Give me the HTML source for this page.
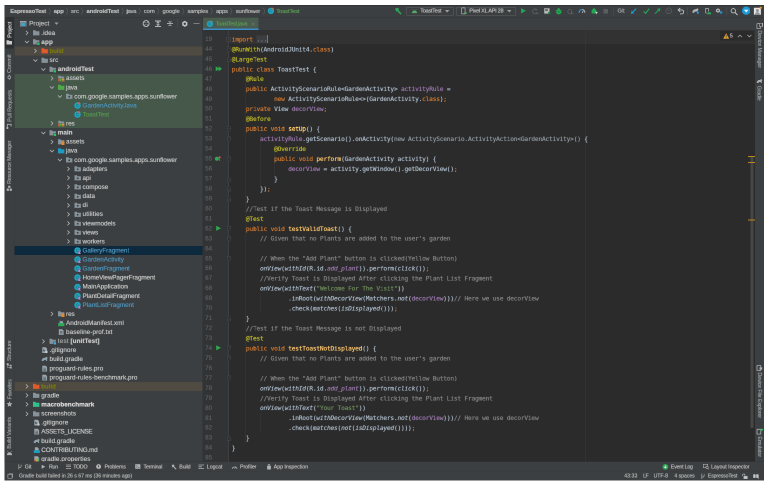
<!DOCTYPE html>
<html lang="en"><head><meta charset="utf-8"><title>EspressoTest – ToastTest.java</title>
<style>
html,body{margin:0;padding:0;background:#ffffff;}
body{width:768px;height:486px;overflow:hidden;position:relative;}
#w{position:absolute;left:0;top:0;width:1536px;height:972px;transform:scale(.5);transform-origin:0 0;will-change:transform;font-family:"Liberation Sans", sans-serif;overflow:hidden;}
#w div,#w svg{position:absolute;}
#w div.code{font-family:"DejaVu Sans Mono", "Liberation Mono", monospace;}
#w div span{position:static;}
#w div{text-shadow:0 0 1.2px currentColor;}
</style></head><body><div id="w">
<div style="left:8.60px;top:9.60px;width:1519.10px;height:951.10px;background:#3c3f41;"></div>
<div style="left:8.60px;top:9.60px;width:1519.10px;height:1.00px;background:#2a2c2d;"></div>
<div style="left:8.60px;top:9.60px;width:1.00px;height:951.10px;background:#2a2c2d;"></div>
<div style="left:8.60px;top:33.80px;width:1519.10px;height:1.00px;background:#323232;"></div>
<div style="top:13.74px;height:16.52px;line-height:16.52px;font-size:11.80px;color:#bbbbbb;white-space:pre;left:20.40px;font-weight:bold;letter-spacing:-0.41px;">EspressoTest</div>
<div style="top:13.74px;height:16.52px;line-height:16.52px;font-size:11.80px;color:#bbbbbb;white-space:pre;left:107.40px;font-weight:bold;letter-spacing:-0.33px;">app</div>
<div style="top:13.74px;height:16.52px;line-height:16.52px;font-size:11.80px;color:#bbbbbb;white-space:pre;left:142.00px;letter-spacing:0.09px;">src</div>
<div style="top:13.74px;height:16.52px;line-height:16.52px;font-size:11.80px;color:#bbbbbb;white-space:pre;left:173.00px;font-weight:bold;letter-spacing:-0.15px;">androidTest</div>
<div style="top:13.74px;height:16.52px;line-height:16.52px;font-size:11.80px;color:#bbbbbb;white-space:pre;left:252.80px;letter-spacing:-0.46px;">java</div>
<div style="top:13.74px;height:16.52px;line-height:16.52px;font-size:11.80px;color:#bbbbbb;white-space:pre;left:287.60px;letter-spacing:-0.16px;">com</div>
<div style="top:13.74px;height:16.52px;line-height:16.52px;font-size:11.80px;color:#bbbbbb;white-space:pre;left:325.00px;letter-spacing:-0.17px;">google</div>
<div style="top:13.74px;height:16.52px;line-height:16.52px;font-size:11.80px;color:#bbbbbb;white-space:pre;left:375.00px;letter-spacing:-0.42px;">samples</div>
<div style="top:13.74px;height:16.52px;line-height:16.52px;font-size:11.80px;color:#bbbbbb;white-space:pre;left:432.00px;letter-spacing:-0.55px;">apps</div>
<div style="top:13.74px;height:16.52px;line-height:16.52px;font-size:11.80px;color:#bbbbbb;white-space:pre;left:471.40px;letter-spacing:-0.17px;">sunflower</div>
<svg style="left:97.20px;top:14.80px;width:4.80px;height:14.40px;" viewBox="0 0 2.4 7.2"><path d="M0.3 0.2 L2.0 3.6 L0.3 7.0" fill="none" stroke="#6b6e70" stroke-width="0.45"/></svg>
<svg style="left:131.60px;top:14.80px;width:4.80px;height:14.40px;" viewBox="0 0 2.4 7.2"><path d="M0.3 0.2 L2.0 3.6 L0.3 7.0" fill="none" stroke="#6b6e70" stroke-width="0.45"/></svg>
<svg style="left:162.20px;top:14.80px;width:4.80px;height:14.40px;" viewBox="0 0 2.4 7.2"><path d="M0.3 0.2 L2.0 3.6 L0.3 7.0" fill="none" stroke="#6b6e70" stroke-width="0.45"/></svg>
<svg style="left:242.80px;top:14.80px;width:4.80px;height:14.40px;" viewBox="0 0 2.4 7.2"><path d="M0.3 0.2 L2.0 3.6 L0.3 7.0" fill="none" stroke="#6b6e70" stroke-width="0.45"/></svg>
<svg style="left:277.00px;top:14.80px;width:4.80px;height:14.40px;" viewBox="0 0 2.4 7.2"><path d="M0.3 0.2 L2.0 3.6 L0.3 7.0" fill="none" stroke="#6b6e70" stroke-width="0.45"/></svg>
<svg style="left:314.20px;top:14.80px;width:4.80px;height:14.40px;" viewBox="0 0 2.4 7.2"><path d="M0.3 0.2 L2.0 3.6 L0.3 7.0" fill="none" stroke="#6b6e70" stroke-width="0.45"/></svg>
<svg style="left:364.20px;top:14.80px;width:4.80px;height:14.40px;" viewBox="0 0 2.4 7.2"><path d="M0.3 0.2 L2.0 3.6 L0.3 7.0" fill="none" stroke="#6b6e70" stroke-width="0.45"/></svg>
<svg style="left:421.20px;top:14.80px;width:4.80px;height:14.40px;" viewBox="0 0 2.4 7.2"><path d="M0.3 0.2 L2.0 3.6 L0.3 7.0" fill="none" stroke="#6b6e70" stroke-width="0.45"/></svg>
<svg style="left:460.20px;top:14.80px;width:4.80px;height:14.40px;" viewBox="0 0 2.4 7.2"><path d="M0.3 0.2 L2.0 3.6 L0.3 7.0" fill="none" stroke="#6b6e70" stroke-width="0.45"/></svg>
<svg style="left:525.60px;top:14.80px;width:4.80px;height:14.40px;" viewBox="0 0 2.4 7.2"><path d="M0.3 0.2 L2.0 3.6 L0.3 7.0" fill="none" stroke="#6b6e70" stroke-width="0.45"/></svg>
<svg style="left:534.80px;top:15.20px;width:13.60px;height:13.60px;" viewBox="0 0 10 10"><circle cx="5" cy="5" r="4.7" fill="#1fa3bd"/><text x="4.9" y="7.3" font-size="6.4" font-weight="bold" text-anchor="middle" fill="#17798c" font-family="Liberation Sans, sans-serif">C</text><path d="M6.6 0 L9.8 1.7 L6.6 3.4 Z" fill="#59a869"/><rect x="6.2" y="0" width="1.2" height="3.2" fill="#e05555"/></svg>
<div style="top:13.74px;height:16.52px;line-height:16.52px;font-size:11.80px;color:#5b9a56;white-space:pre;left:552.60px;letter-spacing:-0.43px;">ToastTest</div>
<svg style="left:787.60px;top:14.00px;width:16.00px;height:16.00px;" viewBox="0 0 8 8"><path d="M1 1.6 L3.6 0.6 L5.2 2.2 L4.4 3.1 L7.6 6.6 L6.5 7.6 L3.2 4.2 L2.4 4.9 Z" fill="#2ea35a"/></svg>
<div style="left:813.20px;top:13.80px;width:93.80px;height:17.20px;box-sizing:border-box;border:1px solid #5e6060;background:#3c3f41;"></div>
<svg style="left:823.20px;top:16.80px;width:12.00px;height:10.40px;" viewBox="0 0 6 5.2"><path d="M0.4 4.6 A2.6 2.6 0 0 1 5.6 4.6 Z" fill="#59a869"/><path d="M1.2 0.6 L2 2 M4.8 0.6 L4 2" stroke="#59a869" stroke-width="0.5"/></svg>
<div style="top:14.16px;height:15.68px;line-height:15.68px;font-size:11.20px;color:#bbbbbb;white-space:pre;left:840.40px;letter-spacing:-0.57px;">ToastTest</div>
<svg style="left:890.40px;top:19.60px;width:8.80px;height:5.20px;" viewBox="0 0 4.4 2.6"><path d="M0 0 H4.4 L2.2 2.6 Z" fill="#9da0a2"/></svg>
<div style="left:912.60px;top:13.80px;width:119.00px;height:17.20px;box-sizing:border-box;border:1px solid #5e6060;background:#3c3f41;"></div>
<svg style="left:922.40px;top:15.20px;width:11.20px;height:14.00px;" viewBox="0 0 5.6 7"><rect x="0.5" y="0.4" width="3.6" height="6" rx="0.6" fill="none" stroke="#afb1b3" stroke-width="0.7"/><circle cx="4.4" cy="5.6" r="1.2" fill="#59a869"/></svg>
<div style="top:14.16px;height:15.68px;line-height:15.68px;font-size:11.20px;color:#bbbbbb;white-space:pre;left:938.40px;letter-spacing:-0.57px;">Pixel XL API 28</div>
<svg style="left:1014.40px;top:19.60px;width:8.80px;height:5.20px;" viewBox="0 0 4.4 2.6"><path d="M0 0 H4.4 L2.2 2.6 Z" fill="#9da0a2"/></svg>
<svg style="left:1042.40px;top:16.40px;width:10.00px;height:11.20px;" viewBox="0 0 5 5.6"><path d="M0.1 0.1 L4.9 2.8 L0.1 5.5 Z" fill="#22a652"/></svg>
<svg style="left:1064.40px;top:15.60px;width:12.80px;height:12.80px;" viewBox="0 0 6.4 6.4"><path d="M4.6 1.6 A2.4 2.4 0 1 0 5.2 4.2" fill="none" stroke="#5e6163" stroke-width="0.8"/><path d="M3.4 0.2 L5.6 1.6 L3.6 2.9Z" fill="#5e6163"/><path d="M4.4 4.4 L6.4 5.4 L4.4 6.4Z" fill="#5e6163"/></svg>
<svg style="left:1088.00px;top:16.00px;width:14.00px;height:13.20px;" viewBox="0 0 7 6.6"><path d="M0.2 0.2 H5.6 V3.4 L4 5.6 H0.2 Z" fill="#b4b6b8"/><rect x="1.2" y="1.4" width="2.6" height="1.3" fill="#3c3f41"/><path d="M4.2 3.6 L7 5 L4.2 6.4 Z" fill="#1f8f47"/></svg>
<svg style="left:1111.20px;top:15.60px;width:12.80px;height:13.20px;" viewBox="0 0 6.4 6.6"><rect x="0.9" y="1.2" width="4.6" height="5.2" rx="2.2" fill="#22a652"/><rect x="1.9" y="0.1" width="2.6" height="2" rx="1" fill="#22a652"/><path d="M0.1 2.6 H1.2 M6.3 2.6 H5.2 M0.1 4.4 H1.2 M6.3 4.4 H5.2" stroke="#22a652" stroke-width="0.7"/><circle cx="3.2" cy="3.9" r="0.9" fill="#17803e"/></svg>
<svg style="left:1134.00px;top:15.60px;width:13.60px;height:13.20px;" viewBox="0 0 6.8 6.6"><rect x="0.9" y="1.2" width="3.8" height="4.6" rx="1.8" fill="none" stroke="#5e6163" stroke-width="0.75"/><path d="M4.2 4 L6.6 5.2 L4.2 6.4Z" fill="#5e6163"/></svg>
<svg style="left:1156.80px;top:17.20px;width:14.00px;height:9.60px;" viewBox="0 0 7 4.8"><path d="M0.8 4.4 A2.8 2.8 0 0 1 3.6 1.0" fill="none" stroke="#2490d6" stroke-width="1.3"/><path d="M3.6 1.0 A2.8 2.8 0 0 1 6.3 4.4" fill="none" stroke="#c4c6c8" stroke-width="0.8"/><path d="M3.6 4.4 L4.9 2.2" stroke="#c4c6c8" stroke-width="0.75"/></svg>
<svg style="left:1181.60px;top:15.20px;width:14.40px;height:14.00px;" viewBox="0 0 7.2 7"><path d="M0.6 2.6 L3 0.4 L5.4 2.6 V6 H0.6 Z" fill="#22a652"/><path d="M4.2 3.8 L7.2 5.2 L5.8 5.6 L5.3 7 Z" fill="#d4d6d8"/></svg>
<div style="left:1206.60px;top:17.80px;width:9.20px;height:9.00px;background:#5a5d5f;"></div>
<div style="left:1226.40px;top:14.00px;width:0.80px;height:16.00px;background:#515456;"></div>
<div style="top:14.44px;height:15.12px;line-height:15.12px;font-size:10.80px;color:#a6a8aa;white-space:pre;left:1235.00px;letter-spacing:-0.30px;">Git:</div>
<svg style="left:1261.20px;top:15.60px;width:12.40px;height:12.40px;" viewBox="0 0 6.2 6.2"><path d="M5.7 0.5 L2 4.4" fill="none" stroke="#1f9ad8" stroke-width="1.05"/><path d="M0.4 5.9 L1.0 2.6 L3.8 5.3 Z" fill="#1f9ad8"/></svg>
<svg style="left:1285.60px;top:16.00px;width:13.60px;height:12.40px;" viewBox="0 0 6.8 6.2"><path d="M0.6 3.4 L2.6 5.4 L6.2 0.7" fill="none" stroke="#22a652" stroke-width="1.15"/></svg>
<svg style="left:1308.80px;top:15.60px;width:12.40px;height:12.40px;" viewBox="0 0 6.2 6.2"><path d="M0.5 5.7 L4.2 2" fill="none" stroke="#22a652" stroke-width="1.05"/><path d="M5.9 0.3 L5.3 3.6 L2.5 0.9 Z" fill="#22a652"/></svg>
<svg style="left:1331.40px;top:15.40px;width:13.20px;height:13.20px;" viewBox="0 0 6.6 6.6"><circle cx="3.3" cy="3.3" r="2.9" fill="none" stroke="#5e6163" stroke-width="0.7"/><path d="M3.2 1.6 V3.4 H4.6" fill="none" stroke="#5a5d5f" stroke-width="0.6"/></svg>
<svg style="left:1355.20px;top:15.20px;width:13.60px;height:13.60px;" viewBox="0 0 6.8 6.8"><path d="M1.4 2.4 H4.2 A2 2 0 0 1 4.2 6.4 H2.6" fill="none" stroke="#c4c6c8" stroke-width="0.9"/><path d="M2.8 0.4 L0.6 2.4 L2.8 4.4" fill="none" stroke="#c4c6c8" stroke-width="0.9"/></svg>
<div style="left:1375.20px;top:14.00px;width:0.80px;height:16.00px;background:#515456;"></div>
<svg style="left:1384.40px;top:16.40px;width:15.20px;height:13.20px;" viewBox="0 0 7.6 6.6"><path d="M0.4 4.8 C0.4 2.4 1.8 1.2 3.6 1.2 C4.4 1.2 4.8 0.6 5.4 0.2 L6.6 1.4 L5.8 2.2 V4.8 H4.6 V3.6 H2.4 V4.8 Z" fill="#b4b6b8"/><rect x="4.4" y="3.4" width="3" height="3" fill="#3c3f41"/><path d="M4.8 3.8 H7 V5 L5.9 6.4 L4.8 5 Z" fill="#2490d6"/></svg>
<svg style="left:1409.60px;top:16.40px;width:13.20px;height:12.80px;" viewBox="0 0 6.6 6.4"><rect x="0.5" y="0.4" width="3" height="4.6" rx="0.5" fill="none" stroke="#b4b6b8" stroke-width="0.7"/><rect x="1.8" y="3.6" width="4.6" height="2.8" fill="#3c3f41"/><path d="M2.2 6.2 A2 2 0 0 1 6.2 6.2 Z" fill="#22b55a"/></svg>
<svg style="left:1430.80px;top:16.40px;width:14.40px;height:12.80px;" viewBox="0 0 7.2 6.4"><path d="M0.4 1.6 L2.5 0.3 L4.6 1.6 V3.6 L2.5 4.8 L0.4 3.6 Z" fill="#b4b6b8"/><circle cx="2.5" cy="2.5" r="0.8" fill="#3c3f41"/><path d="M4.4 3.4 H6.8 V4.8 L5.6 6.2 L4.4 4.8 Z" fill="#2490d6"/></svg>
<div style="left:1452.80px;top:14.00px;width:0.80px;height:16.00px;background:#515456;"></div>
<svg style="left:1460.80px;top:15.60px;width:15.20px;height:15.20px;" viewBox="0 0 7.6 7.6"><circle cx="2.8" cy="2.8" r="2.2" fill="none" stroke="#c4c6c8" stroke-width="0.85"/><path d="M4.4 4.4 L7 7" stroke="#c4c6c8" stroke-width="0.95"/></svg>
<svg style="left:1483.60px;top:13.40px;width:16.80px;height:16.80px;" viewBox="0 0 8.4 8.4"><circle cx="4.2" cy="4.2" r="4.2" fill="#1d9bd8"/><path d="M1.9 3.2 H6.5 L4.2 6.0 Z" fill="#e8f4fb"/></svg>
<svg style="left:1507.20px;top:13.20px;width:16.80px;height:16.40px;" viewBox="0 0 8.4 8.2"><rect x="0.4" y="1.2" width="7" height="7" rx="0.5" fill="#e4e4e4"/><path d="M1.4 8.2 A2.5 2.6 0 0 1 6.4 8.2Z" fill="#8e9092"/><circle cx="3.9" cy="4.0" r="1.5" fill="#8e9092"/><circle cx="7.2" cy="1.3" r="1.2" fill="#f0902a"/></svg>
<div style="left:8.60px;top:34.60px;width:19.80px;height:62.80px;background:#2d2f30;"></div>
<div style="left:27.80px;top:34.60px;width:1.00px;height:888.60px;background:#37393b;"></div>
<div style="left:2.60px;top:51.78px;width:40.00px;height:14.84px;line-height:14.84px;font-size:10.60px;color:#d4d4d4;letter-spacing:-0.17px;text-align:left;white-space:pre;transform-origin:16.00px 50%;transform:rotate(-90deg);">Project</div>
<svg style="left:13.00px;top:80.00px;width:11.20px;height:9.20px;" viewBox="0 0 5.6 4.6"><path d="M0 0.2 H2.2 L2.9 1 H5.6 V4.6 H0 Z" fill="#c8cacb"/></svg>
<div style="left:0.00px;top:119.98px;width:45.20px;height:14.84px;line-height:14.84px;font-size:10.60px;color:#9da0a2;letter-spacing:0.14px;text-align:left;white-space:pre;transform-origin:18.60px 50%;transform:rotate(-90deg);">Commit</div>
<svg style="left:13.00px;top:148.80px;width:11.20px;height:11.20px;" viewBox="0 0 5.6 5.6"><circle cx="2.8" cy="2.8" r="1.4" fill="none" stroke="#afb1b3" stroke-width="0.7"/><path d="M2.8 0 V1.4 M2.8 4.2 V5.6" stroke="#afb1b3" stroke-width="0.7"/></svg>
<div style="left:-13.40px;top:203.78px;width:72.00px;height:14.84px;line-height:14.84px;font-size:10.60px;color:#9da0a2;letter-spacing:-0.12px;text-align:left;white-space:pre;transform-origin:32.00px 50%;transform:rotate(-90deg);">Pull Requests</div>
<svg style="left:13.00px;top:247.20px;width:11.20px;height:11.20px;" viewBox="0 0 5.6 5.6"><path d="M0.8 0.6 V5 M0.8 0.8 H4.6 V3" fill="none" stroke="#afb1b3" stroke-width="0.9"/><rect x="0" y="3.8" width="1.8" height="1.8" fill="#afb1b3"/></svg>
<div style="left:-24.80px;top:316.78px;width:94.80px;height:14.84px;line-height:14.84px;font-size:10.60px;color:#9da0a2;letter-spacing:-0.22px;text-align:left;white-space:pre;transform-origin:43.40px 50%;transform:rotate(-90deg);">Resource Manager</div>
<svg style="left:13.00px;top:371.20px;width:11.20px;height:11.20px;" viewBox="0 0 5.6 5.6"><rect x="0.2" y="3" width="2.2" height="2.4" fill="#afb1b3"/><rect x="3.2" y="3" width="2.2" height="2.4" fill="#afb1b3"/><rect x="1.7" y="0.2" width="2.2" height="2.2" fill="#afb1b3"/></svg>
<div style="left:-2.00px;top:693.98px;width:49.20px;height:14.84px;line-height:14.84px;font-size:10.60px;color:#9da0a2;letter-spacing:-0.23px;text-align:left;white-space:pre;transform-origin:20.60px 50%;transform:rotate(-90deg);">Structure</div>
<svg style="left:13.00px;top:726.00px;width:11.20px;height:11.20px;" viewBox="0 0 5.6 5.6"><rect x="0.2" y="0.2" width="2" height="2" fill="#afb1b3"/><rect x="3.2" y="1.8" width="2" height="1.6" fill="#afb1b3"/><rect x="3.2" y="3.9" width="2" height="1.6" fill="#afb1b3"/><path d="M1.2 2 V4.7 H3.2 M1.2 2.6 H3.2" fill="none" stroke="#afb1b3" stroke-width="0.5"/></svg>
<div style="left:-1.40px;top:771.38px;width:48.00px;height:14.84px;line-height:14.84px;font-size:10.60px;color:#9da0a2;letter-spacing:-0.45px;text-align:left;white-space:pre;transform-origin:20.00px 50%;transform:rotate(-90deg);">Favorites</div>
<svg style="left:12.60px;top:801.60px;width:12.00px;height:12.00px;" viewBox="0 0 6 6"><path d="M3 0.2 L3.9 2.1 L5.9 2.3 L4.4 3.7 L4.8 5.8 L3 4.8 L1.2 5.8 L1.6 3.7 L0.1 2.3 L2.1 2.1 Z" fill="#afb1b3"/></svg>
<div style="left:-13.20px;top:857.58px;width:71.60px;height:14.84px;line-height:14.84px;font-size:10.60px;color:#9da0a2;letter-spacing:-0.08px;text-align:left;white-space:pre;transform-origin:31.80px 50%;transform:rotate(-90deg);">Build Variants</div>
<svg style="left:12.60px;top:900.80px;width:12.00px;height:10.00px;" viewBox="0 0 6 5"><path d="M0.4 4.6 A2.6 2.8 0 0 1 5.6 4.6 Z" fill="#afb1b3"/><path d="M1 0.4 L1.8 1.8 M5 0.4 L4.2 1.8" stroke="#afb1b3" stroke-width="0.5"/></svg>
<div style="left:405.40px;top:34.60px;width:1.00px;height:888.60px;background:#323232;"></div>
<svg style="left:40.40px;top:41.60px;width:12.80px;height:11.60px;" viewBox="0 0 6.4 5.8"><rect x="0.3" y="0.3" width="5.8" height="5.2" fill="none" stroke="#9aa7b0" stroke-width="0.6"/><rect x="0.3" y="0.3" width="5.8" height="1.3" fill="#9aa7b0"/><rect x="1" y="2" width="4.4" height="3" fill="#40b6e0" opacity="0.85"/></svg>
<div style="top:38.30px;height:18.20px;line-height:18.20px;font-size:13.00px;color:#bbbbbb;white-space:pre;left:58.20px;">Project</div>
<svg style="left:109.20px;top:45.40px;width:8.00px;height:4.80px;" viewBox="0 0 4 2.4"><path d="M0 0 H4 L2 2.4 Z" fill="#9da0a2"/></svg>
<svg style="left:285.40px;top:40.20px;width:14.40px;height:14.40px;" viewBox="0 0 7.2 7.2"><circle cx="3.6" cy="3.6" r="3.0" fill="none" stroke="#c0c2c4" stroke-width="0.9"/><path d="M1.6 1.6 L5.6 5.6 M5.6 1.6 L1.6 5.6" stroke="#c0c2c4" stroke-width="0.6"/><circle cx="3.6" cy="3.6" r="0.9" fill="#3c3f41"/></svg>
<svg style="left:310.40px;top:41.00px;width:12.00px;height:12.80px;" viewBox="0 0 6 6.4"><path d="M0 0.5 H6 M0 5.9 H6" stroke="#c0c2c4" stroke-width="0.9"/><path d="M3 1.4 V5 M1.6 2.6 L3 1.3 L4.4 2.6 M1.6 3.8 L3 5.1 L4.4 3.8" fill="none" stroke="#c0c2c4" stroke-width="0.7"/></svg>
<svg style="left:333.80px;top:42.20px;width:12.00px;height:10.40px;" viewBox="0 0 6 5.2"><path d="M0 2.6 H6" stroke="#c0c2c4" stroke-width="0.8"/><path d="M1.6 0.2 L3 1.5 L4.4 0.2 M1.6 5 L3 3.7 L4.4 5" fill="none" stroke="#c0c2c4" stroke-width="0.7"/></svg>
<div style="left:353.60px;top:39.00px;width:0.80px;height:16.80px;background:#505355;"></div>
<svg style="left:362.80px;top:40.80px;width:13.20px;height:13.20px;" viewBox="0 0 6.6 6.6"><path d="M3.3 0.2 L5.9 1.7 V4.9 L3.3 6.4 L0.7 4.9 V1.7 Z" fill="#c0c2c4"/><circle cx="3.3" cy="3.3" r="1.2" fill="#3c3f41"/></svg>
<div style="left:386.80px;top:46.60px;width:11.80px;height:1.70px;background:#c0c2c4;"></div>
<div style="left:28.80px;top:147.58px;width:376.60px;height:108.77px;background:#45584a;"></div>
<div style="left:28.80px;top:93.19px;width:376.60px;height:18.13px;background:#4f4a42;"></div>
<div style="left:28.80px;top:763.93px;width:376.60px;height:18.13px;background:#4f4a42;"></div>
<div style="left:28.80px;top:492.01px;width:376.60px;height:18.13px;background:#0d293e;"></div>
<svg style="left:51.20px;top:61.20px;width:6.00px;height:9.60px;" viewBox="0 0 3 4.8"><path d="M0.4 0.4 L2.4 2.4 L0.4 4.4" fill="none" stroke="#b4b6b8" stroke-width="0.8"/></svg>
<svg style="left:66.20px;top:60.20px;width:13.60px;height:12.40px;" viewBox="0 0 6.8 6.2"><path d="M0 0.3 H2.4 L3.1 1.2 H6.4 V5.4 H0 Z" fill="#87939a"/></svg>
<div style="top:57.81px;height:17.78px;line-height:17.78px;font-size:12.70px;color:#c6c6c6;white-space:pre;left:82.60px;letter-spacing:0.05px;">.idea</div>
<svg style="left:49.20px;top:81.33px;width:9.60px;height:6.00px;" viewBox="0 0 4.8 3"><path d="M0.4 0.4 L2.4 2.4 L4.4 0.4" fill="none" stroke="#b4b6b8" stroke-width="0.8"/></svg>
<svg style="left:66.20px;top:78.33px;width:13.60px;height:12.40px;" viewBox="0 0 6.8 6.2"><path d="M0 0.3 H2.4 L3.1 1.2 H6.4 V5.4 H0 Z" fill="#87939a"/><rect x="3.8" y="3.2" width="2.8" height="2.8" fill="#3c3f41"/><rect x="4.2" y="3.6" width="2.4" height="2.4" fill="#2fc15a"/></svg>
<div style="top:75.94px;height:17.78px;line-height:17.78px;font-size:12.70px;color:#c6c6c6;white-space:pre;left:82.60px;font-weight:bold;letter-spacing:0.34px;">app</div>
<svg style="left:67.70px;top:97.46px;width:6.00px;height:9.60px;" viewBox="0 0 3 4.8"><path d="M0.4 0.4 L2.4 2.4 L0.4 4.4" fill="none" stroke="#b4b6b8" stroke-width="0.8"/></svg>
<svg style="left:82.70px;top:96.46px;width:13.60px;height:12.40px;" viewBox="0 0 6.8 6.2"><path d="M0 0.3 H2.4 L3.1 1.2 H6.4 V5.4 H0 Z" fill="#e2592a"/></svg>
<div style="top:94.07px;height:17.78px;line-height:17.78px;font-size:12.70px;color:#848504;white-space:pre;left:99.10px;letter-spacing:0.29px;">build</div>
<svg style="left:65.70px;top:117.58px;width:9.60px;height:6.00px;" viewBox="0 0 4.8 3"><path d="M0.4 0.4 L2.4 2.4 L4.4 0.4" fill="none" stroke="#b4b6b8" stroke-width="0.8"/></svg>
<svg style="left:82.70px;top:114.58px;width:13.60px;height:12.40px;" viewBox="0 0 6.8 6.2"><path d="M0 0.3 H2.4 L3.1 1.2 H6.4 V5.4 H0 Z" fill="#87939a"/></svg>
<div style="top:112.19px;height:17.78px;line-height:17.78px;font-size:12.70px;color:#c6c6c6;white-space:pre;left:99.10px;letter-spacing:0.32px;">src</div>
<svg style="left:82.20px;top:135.71px;width:9.60px;height:6.00px;" viewBox="0 0 4.8 3"><path d="M0.4 0.4 L2.4 2.4 L4.4 0.4" fill="none" stroke="#b4b6b8" stroke-width="0.8"/></svg>
<svg style="left:99.20px;top:132.71px;width:13.60px;height:12.40px;" viewBox="0 0 6.8 6.2"><path d="M0 0.3 H2.4 L3.1 1.2 H6.4 V5.4 H0 Z" fill="#87939a"/><rect x="3.8" y="3.2" width="2.8" height="2.8" fill="#3c3f41"/><rect x="4.2" y="3.6" width="2.4" height="2.4" fill="#2fc15a"/></svg>
<div style="top:130.32px;height:17.78px;line-height:17.78px;font-size:12.70px;color:#c6c6c6;white-space:pre;left:115.60px;font-weight:bold;letter-spacing:0.01px;">androidTest</div>
<svg style="left:100.70px;top:151.84px;width:6.00px;height:9.60px;" viewBox="0 0 3 4.8"><path d="M0.4 0.4 L2.4 2.4 L0.4 4.4" fill="none" stroke="#b4b6b8" stroke-width="0.8"/></svg>
<svg style="left:115.70px;top:150.84px;width:13.60px;height:12.40px;" viewBox="0 0 6.8 6.2"><path d="M0.2 0.2 H2.4 L3.1 1.0 H6.2 V3.0 H0.2 Z" fill="#87939a"/><rect x="0.2" y="3.3" width="1.4" height="2.6" fill="#e0573a"/><rect x="1.7" y="3.3" width="1.3" height="2.6" fill="#4fa84a"/><rect x="3.5" y="3.3" width="2.9" height="1.1" fill="#e8a03a"/><rect x="3.5" y="4.8" width="2.9" height="1.1" fill="#e08a32"/></svg>
<div style="top:148.45px;height:17.78px;line-height:17.78px;font-size:12.70px;color:#c6c6c6;white-space:pre;left:132.10px;letter-spacing:-0.00px;">assets</div>
<svg style="left:98.70px;top:171.97px;width:9.60px;height:6.00px;" viewBox="0 0 4.8 3"><path d="M0.4 0.4 L2.4 2.4 L4.4 0.4" fill="none" stroke="#b4b6b8" stroke-width="0.8"/></svg>
<svg style="left:115.70px;top:168.97px;width:13.60px;height:12.40px;" viewBox="0 0 6.8 6.2"><path d="M0 0.3 H2.4 L3.1 1.2 H6.4 V5.4 H0 Z" fill="#4fa84a"/></svg>
<div style="top:166.58px;height:17.78px;line-height:17.78px;font-size:12.70px;color:#c6c6c6;white-space:pre;left:132.10px;letter-spacing:-0.20px;">java</div>
<svg style="left:115.20px;top:190.10px;width:9.60px;height:6.00px;" viewBox="0 0 4.8 3"><path d="M0.4 0.4 L2.4 2.4 L4.4 0.4" fill="none" stroke="#b4b6b8" stroke-width="0.8"/></svg>
<svg style="left:132.20px;top:187.10px;width:13.60px;height:12.40px;" viewBox="0 0 6.8 6.2"><path d="M0 0.3 H2.4 L3.1 1.2 H6.4 V5.4 H0 Z" fill="#87939a"/><circle cx="3.2" cy="3.3" r="0.9" fill="#3c3f41"/></svg>
<div style="top:184.71px;height:17.78px;line-height:17.78px;font-size:12.70px;color:#c6c6c6;white-space:pre;left:148.60px;letter-spacing:0.01px;">com.google.samples.apps.sunflower</div>
<svg style="left:147.90px;top:204.02px;width:14.00px;height:14.00px;" viewBox="0 0 10 10"><circle cx="5" cy="5" r="4.7" fill="#1fa3bd"/><text x="4.9" y="7.3" font-size="6.4" font-weight="bold" text-anchor="middle" fill="#17798c" font-family="Liberation Sans, sans-serif">C</text><path d="M6.6 0 L9.8 1.7 L6.6 3.4 Z" fill="#59a869"/><rect x="6.2" y="0" width="1.2" height="3.2" fill="#e05555"/></svg>
<div style="top:202.83px;height:17.78px;line-height:17.78px;font-size:12.70px;color:#4d92b8;white-space:pre;left:165.10px;letter-spacing:-0.06px;">GardenActivityJava</div>
<svg style="left:147.90px;top:222.15px;width:14.00px;height:14.00px;" viewBox="0 0 10 10"><circle cx="5" cy="5" r="4.7" fill="#1fa3bd"/><text x="4.9" y="7.3" font-size="6.4" font-weight="bold" text-anchor="middle" fill="#17798c" font-family="Liberation Sans, sans-serif">C</text><path d="M6.6 0 L9.8 1.7 L6.6 3.4 Z" fill="#59a869"/><rect x="6.2" y="0" width="1.2" height="3.2" fill="#e05555"/></svg>
<div style="top:220.96px;height:17.78px;line-height:17.78px;font-size:12.70px;color:#57964f;white-space:pre;left:165.10px;letter-spacing:-0.08px;">ToastTest</div>
<svg style="left:100.70px;top:242.48px;width:6.00px;height:9.60px;" viewBox="0 0 3 4.8"><path d="M0.4 0.4 L2.4 2.4 L0.4 4.4" fill="none" stroke="#b4b6b8" stroke-width="0.8"/></svg>
<svg style="left:115.70px;top:241.48px;width:13.60px;height:12.40px;" viewBox="0 0 6.8 6.2"><path d="M0.2 0.2 H2.4 L3.1 1.0 H6.2 V3.0 H0.2 Z" fill="#87939a"/><rect x="0.2" y="3.3" width="1.4" height="2.6" fill="#e0573a"/><rect x="1.7" y="3.3" width="1.3" height="2.6" fill="#4fa84a"/><rect x="3.5" y="3.3" width="2.9" height="1.1" fill="#e8a03a"/><rect x="3.5" y="4.8" width="2.9" height="1.1" fill="#e08a32"/></svg>
<div style="top:239.09px;height:17.78px;line-height:17.78px;font-size:12.70px;color:#c6c6c6;white-space:pre;left:132.10px;letter-spacing:-0.18px;">res</div>
<svg style="left:82.20px;top:262.61px;width:9.60px;height:6.00px;" viewBox="0 0 4.8 3"><path d="M0.4 0.4 L2.4 2.4 L4.4 0.4" fill="none" stroke="#b4b6b8" stroke-width="0.8"/></svg>
<svg style="left:99.20px;top:259.61px;width:13.60px;height:12.40px;" viewBox="0 0 6.8 6.2"><path d="M0 0.3 H2.4 L3.1 1.2 H6.4 V5.4 H0 Z" fill="#87939a"/><rect x="3.8" y="3.2" width="2.8" height="2.8" fill="#3c3f41"/><rect x="4.2" y="3.6" width="2.4" height="2.4" fill="#2fc15a"/></svg>
<div style="top:257.22px;height:17.78px;line-height:17.78px;font-size:12.70px;color:#c6c6c6;white-space:pre;left:115.60px;font-weight:bold;letter-spacing:-0.06px;">main</div>
<svg style="left:100.70px;top:278.74px;width:6.00px;height:9.60px;" viewBox="0 0 3 4.8"><path d="M0.4 0.4 L2.4 2.4 L0.4 4.4" fill="none" stroke="#b4b6b8" stroke-width="0.8"/></svg>
<svg style="left:115.70px;top:277.74px;width:13.60px;height:12.40px;" viewBox="0 0 6.8 6.2"><path d="M0 0.3 H2.4 L3.1 1.2 H6.4 V5.4 H0 Z" fill="#87939a"/><rect x="3.6" y="2.6" width="3" height="3.4" fill="#e08a32"/></svg>
<div style="top:275.35px;height:17.78px;line-height:17.78px;font-size:12.70px;color:#c6c6c6;white-space:pre;left:132.10px;letter-spacing:-0.00px;">assets</div>
<svg style="left:98.70px;top:298.86px;width:9.60px;height:6.00px;" viewBox="0 0 4.8 3"><path d="M0.4 0.4 L2.4 2.4 L4.4 0.4" fill="none" stroke="#b4b6b8" stroke-width="0.8"/></svg>
<svg style="left:115.70px;top:295.86px;width:13.60px;height:12.40px;" viewBox="0 0 6.8 6.2"><path d="M0 0.3 H2.4 L3.1 1.2 H6.4 V5.4 H0 Z" fill="#1d9bc0"/></svg>
<div style="top:293.47px;height:17.78px;line-height:17.78px;font-size:12.70px;color:#c6c6c6;white-space:pre;left:132.10px;letter-spacing:-0.20px;">java</div>
<svg style="left:115.20px;top:316.99px;width:9.60px;height:6.00px;" viewBox="0 0 4.8 3"><path d="M0.4 0.4 L2.4 2.4 L4.4 0.4" fill="none" stroke="#b4b6b8" stroke-width="0.8"/></svg>
<svg style="left:132.20px;top:313.99px;width:13.60px;height:12.40px;" viewBox="0 0 6.8 6.2"><path d="M0 0.3 H2.4 L3.1 1.2 H6.4 V5.4 H0 Z" fill="#87939a"/><circle cx="3.2" cy="3.3" r="0.9" fill="#3c3f41"/></svg>
<div style="top:311.60px;height:17.78px;line-height:17.78px;font-size:12.70px;color:#c6c6c6;white-space:pre;left:148.60px;letter-spacing:0.01px;">com.google.samples.apps.sunflower</div>
<svg style="left:133.70px;top:333.12px;width:6.00px;height:9.60px;" viewBox="0 0 3 4.8"><path d="M0.4 0.4 L2.4 2.4 L0.4 4.4" fill="none" stroke="#b4b6b8" stroke-width="0.8"/></svg>
<svg style="left:148.70px;top:332.12px;width:13.60px;height:12.40px;" viewBox="0 0 6.8 6.2"><path d="M0 0.3 H2.4 L3.1 1.2 H6.4 V5.4 H0 Z" fill="#87939a"/><circle cx="3.2" cy="3.3" r="0.9" fill="#3c3f41"/></svg>
<div style="top:329.73px;height:17.78px;line-height:17.78px;font-size:12.70px;color:#c6c6c6;white-space:pre;left:165.10px;letter-spacing:0.01px;">adapters</div>
<svg style="left:133.70px;top:351.25px;width:6.00px;height:9.60px;" viewBox="0 0 3 4.8"><path d="M0.4 0.4 L2.4 2.4 L0.4 4.4" fill="none" stroke="#b4b6b8" stroke-width="0.8"/></svg>
<svg style="left:148.70px;top:350.25px;width:13.60px;height:12.40px;" viewBox="0 0 6.8 6.2"><path d="M0 0.3 H2.4 L3.1 1.2 H6.4 V5.4 H0 Z" fill="#87939a"/><circle cx="3.2" cy="3.3" r="0.9" fill="#3c3f41"/></svg>
<div style="top:347.86px;height:17.78px;line-height:17.78px;font-size:12.70px;color:#c6c6c6;white-space:pre;left:165.10px;letter-spacing:-0.15px;">api</div>
<svg style="left:133.70px;top:369.38px;width:6.00px;height:9.60px;" viewBox="0 0 3 4.8"><path d="M0.4 0.4 L2.4 2.4 L0.4 4.4" fill="none" stroke="#b4b6b8" stroke-width="0.8"/></svg>
<svg style="left:148.70px;top:368.38px;width:13.60px;height:12.40px;" viewBox="0 0 6.8 6.2"><path d="M0 0.3 H2.4 L3.1 1.2 H6.4 V5.4 H0 Z" fill="#87939a"/><circle cx="3.2" cy="3.3" r="0.9" fill="#3c3f41"/></svg>
<div style="top:365.99px;height:17.78px;line-height:17.78px;font-size:12.70px;color:#c6c6c6;white-space:pre;left:165.10px;letter-spacing:-0.00px;">compose</div>
<svg style="left:133.70px;top:387.50px;width:6.00px;height:9.60px;" viewBox="0 0 3 4.8"><path d="M0.4 0.4 L2.4 2.4 L0.4 4.4" fill="none" stroke="#b4b6b8" stroke-width="0.8"/></svg>
<svg style="left:148.70px;top:386.50px;width:13.60px;height:12.40px;" viewBox="0 0 6.8 6.2"><path d="M0 0.3 H2.4 L3.1 1.2 H6.4 V5.4 H0 Z" fill="#87939a"/><circle cx="3.2" cy="3.3" r="0.9" fill="#3c3f41"/></svg>
<div style="top:384.11px;height:17.78px;line-height:17.78px;font-size:12.70px;color:#c6c6c6;white-space:pre;left:165.10px;letter-spacing:0.05px;">data</div>
<svg style="left:133.70px;top:405.63px;width:6.00px;height:9.60px;" viewBox="0 0 3 4.8"><path d="M0.4 0.4 L2.4 2.4 L0.4 4.4" fill="none" stroke="#b4b6b8" stroke-width="0.8"/></svg>
<svg style="left:148.70px;top:404.63px;width:13.60px;height:12.40px;" viewBox="0 0 6.8 6.2"><path d="M0 0.3 H2.4 L3.1 1.2 H6.4 V5.4 H0 Z" fill="#87939a"/><circle cx="3.2" cy="3.3" r="0.9" fill="#3c3f41"/></svg>
<div style="top:402.24px;height:17.78px;line-height:17.78px;font-size:12.70px;color:#c6c6c6;white-space:pre;left:165.10px;letter-spacing:0.61px;">di</div>
<svg style="left:133.70px;top:423.76px;width:6.00px;height:9.60px;" viewBox="0 0 3 4.8"><path d="M0.4 0.4 L2.4 2.4 L0.4 4.4" fill="none" stroke="#b4b6b8" stroke-width="0.8"/></svg>
<svg style="left:148.70px;top:422.76px;width:13.60px;height:12.40px;" viewBox="0 0 6.8 6.2"><path d="M0 0.3 H2.4 L3.1 1.2 H6.4 V5.4 H0 Z" fill="#87939a"/><circle cx="3.2" cy="3.3" r="0.9" fill="#3c3f41"/></svg>
<div style="top:420.37px;height:17.78px;line-height:17.78px;font-size:12.70px;color:#c6c6c6;white-space:pre;left:165.10px;letter-spacing:0.25px;">utilities</div>
<svg style="left:133.70px;top:441.89px;width:6.00px;height:9.60px;" viewBox="0 0 3 4.8"><path d="M0.4 0.4 L2.4 2.4 L0.4 4.4" fill="none" stroke="#b4b6b8" stroke-width="0.8"/></svg>
<svg style="left:148.70px;top:440.89px;width:13.60px;height:12.40px;" viewBox="0 0 6.8 6.2"><path d="M0 0.3 H2.4 L3.1 1.2 H6.4 V5.4 H0 Z" fill="#87939a"/><circle cx="3.2" cy="3.3" r="0.9" fill="#3c3f41"/></svg>
<div style="top:438.50px;height:17.78px;line-height:17.78px;font-size:12.70px;color:#c6c6c6;white-space:pre;left:165.10px;letter-spacing:-0.02px;">viewmodels</div>
<svg style="left:133.70px;top:460.02px;width:6.00px;height:9.60px;" viewBox="0 0 3 4.8"><path d="M0.4 0.4 L2.4 2.4 L0.4 4.4" fill="none" stroke="#b4b6b8" stroke-width="0.8"/></svg>
<svg style="left:148.70px;top:459.02px;width:13.60px;height:12.40px;" viewBox="0 0 6.8 6.2"><path d="M0 0.3 H2.4 L3.1 1.2 H6.4 V5.4 H0 Z" fill="#87939a"/><circle cx="3.2" cy="3.3" r="0.9" fill="#3c3f41"/></svg>
<div style="top:456.63px;height:17.78px;line-height:17.78px;font-size:12.70px;color:#c6c6c6;white-space:pre;left:165.10px;letter-spacing:-0.13px;">views</div>
<svg style="left:133.70px;top:478.14px;width:6.00px;height:9.60px;" viewBox="0 0 3 4.8"><path d="M0.4 0.4 L2.4 2.4 L0.4 4.4" fill="none" stroke="#b4b6b8" stroke-width="0.8"/></svg>
<svg style="left:148.70px;top:477.14px;width:13.60px;height:12.40px;" viewBox="0 0 6.8 6.2"><path d="M0 0.3 H2.4 L3.1 1.2 H6.4 V5.4 H0 Z" fill="#87939a"/><circle cx="3.2" cy="3.3" r="0.9" fill="#3c3f41"/></svg>
<div style="top:474.75px;height:17.78px;line-height:17.78px;font-size:12.70px;color:#c6c6c6;white-space:pre;left:165.10px;letter-spacing:0.01px;">workers</div>
<svg style="left:147.90px;top:494.07px;width:14.00px;height:14.00px;" viewBox="0 0 10 10"><circle cx="5" cy="5" r="4.7" fill="#1fa3bd"/><text x="4.9" y="7.3" font-size="6.4" font-weight="bold" text-anchor="middle" fill="#17798c" font-family="Liberation Sans, sans-serif">C</text><path d="M5.6 5.6 H10 V10 H5.6 Z" fill="#3c3f41" opacity="0.55"/><path d="M6.2 6.2 H10 L8.1 8.1 L10 10 H6.2 Z" fill="#b98be6"/></svg>
<div style="top:492.88px;height:17.78px;line-height:17.78px;font-size:12.70px;color:#4d92b8;white-space:pre;left:165.10px;letter-spacing:-0.09px;">GalleryFragment</div>
<svg style="left:147.90px;top:512.20px;width:14.00px;height:14.00px;" viewBox="0 0 10 10"><circle cx="5" cy="5" r="4.7" fill="#1fa3bd"/><text x="4.9" y="7.3" font-size="6.4" font-weight="bold" text-anchor="middle" fill="#17798c" font-family="Liberation Sans, sans-serif">C</text><path d="M5.6 5.6 H10 V10 H5.6 Z" fill="#3c3f41" opacity="0.55"/><path d="M6.2 6.2 H10 L8.1 8.1 L10 10 H6.2 Z" fill="#b98be6"/></svg>
<div style="top:511.01px;height:17.78px;line-height:17.78px;font-size:12.70px;color:#4d92b8;white-space:pre;left:165.10px;letter-spacing:0.02px;">GardenActivity</div>
<svg style="left:147.90px;top:530.33px;width:14.00px;height:14.00px;" viewBox="0 0 10 10"><circle cx="5" cy="5" r="4.7" fill="#1fa3bd"/><text x="4.9" y="7.3" font-size="6.4" font-weight="bold" text-anchor="middle" fill="#17798c" font-family="Liberation Sans, sans-serif">C</text><path d="M5.6 5.6 H10 V10 H5.6 Z" fill="#3c3f41" opacity="0.55"/><path d="M6.2 6.2 H10 L8.1 8.1 L10 10 H6.2 Z" fill="#b98be6"/></svg>
<div style="top:529.14px;height:17.78px;line-height:17.78px;font-size:12.70px;color:#4d92b8;white-space:pre;left:165.10px;letter-spacing:-0.16px;">GardenFragment</div>
<svg style="left:147.90px;top:548.46px;width:14.00px;height:14.00px;" viewBox="0 0 10 10"><circle cx="5" cy="5" r="4.7" fill="#1fa3bd"/><text x="4.9" y="7.3" font-size="6.4" font-weight="bold" text-anchor="middle" fill="#17798c" font-family="Liberation Sans, sans-serif">C</text><path d="M5.6 5.6 H10 V10 H5.6 Z" fill="#3c3f41" opacity="0.55"/><path d="M6.2 6.2 H10 L8.1 8.1 L10 10 H6.2 Z" fill="#b98be6"/></svg>
<div style="top:547.27px;height:17.78px;line-height:17.78px;font-size:12.70px;color:#c6c6c6;white-space:pre;left:165.10px;letter-spacing:-0.20px;">HomeViewPagerFragment</div>
<svg style="left:147.90px;top:566.58px;width:14.00px;height:14.00px;" viewBox="0 0 10 10"><circle cx="5" cy="5" r="4.7" fill="#1fa3bd"/><text x="4.9" y="7.3" font-size="6.4" font-weight="bold" text-anchor="middle" fill="#17798c" font-family="Liberation Sans, sans-serif">C</text><path d="M5.6 5.6 H10 V10 H5.6 Z" fill="#3c3f41" opacity="0.55"/><path d="M6.2 6.2 H10 L8.1 8.1 L10 10 H6.2 Z" fill="#b98be6"/></svg>
<div style="top:565.39px;height:17.78px;line-height:17.78px;font-size:12.70px;color:#c6c6c6;white-space:pre;left:165.10px;letter-spacing:0.04px;">MainApplication</div>
<svg style="left:147.90px;top:584.71px;width:14.00px;height:14.00px;" viewBox="0 0 10 10"><circle cx="5" cy="5" r="4.7" fill="#1fa3bd"/><text x="4.9" y="7.3" font-size="6.4" font-weight="bold" text-anchor="middle" fill="#17798c" font-family="Liberation Sans, sans-serif">C</text><path d="M5.6 5.6 H10 V10 H5.6 Z" fill="#3c3f41" opacity="0.55"/><path d="M6.2 6.2 H10 L8.1 8.1 L10 10 H6.2 Z" fill="#b98be6"/></svg>
<div style="top:583.52px;height:17.78px;line-height:17.78px;font-size:12.70px;color:#c6c6c6;white-space:pre;left:165.10px;letter-spacing:-0.07px;">PlantDetailFragment</div>
<svg style="left:147.90px;top:602.84px;width:14.00px;height:14.00px;" viewBox="0 0 10 10"><circle cx="5" cy="5" r="4.7" fill="#1fa3bd"/><text x="4.9" y="7.3" font-size="6.4" font-weight="bold" text-anchor="middle" fill="#17798c" font-family="Liberation Sans, sans-serif">C</text><path d="M5.6 5.6 H10 V10 H5.6 Z" fill="#3c3f41" opacity="0.55"/><path d="M6.2 6.2 H10 L8.1 8.1 L10 10 H6.2 Z" fill="#b98be6"/></svg>
<div style="top:601.65px;height:17.78px;line-height:17.78px;font-size:12.70px;color:#4d92b8;white-space:pre;left:165.10px;letter-spacing:-0.01px;">PlantListFragment</div>
<svg style="left:100.70px;top:623.17px;width:6.00px;height:9.60px;" viewBox="0 0 3 4.8"><path d="M0.4 0.4 L2.4 2.4 L0.4 4.4" fill="none" stroke="#b4b6b8" stroke-width="0.8"/></svg>
<svg style="left:115.70px;top:622.17px;width:13.60px;height:12.40px;" viewBox="0 0 6.8 6.2"><path d="M0 0.3 H2.4 L3.1 1.2 H6.4 V5.4 H0 Z" fill="#87939a"/><rect x="3.6" y="2.6" width="3" height="3.4" fill="#e08a32"/></svg>
<div style="top:619.78px;height:17.78px;line-height:17.78px;font-size:12.70px;color:#c6c6c6;white-space:pre;left:132.10px;letter-spacing:-0.18px;">res</div>
<svg style="left:116.10px;top:639.90px;width:13.20px;height:12.80px;" viewBox="0 0 6.6 6.4"><rect x="0.2" y="3" width="6.2" height="3.2" fill="#2fa85a"/><path d="M1.4 3 A1.9 1.9 0 0 1 5.2 3 Z" fill="#9aa7b0"/><path d="M1.6 0.4 L2.2 1.4 M5 0.4 L4.4 1.4" stroke="#9aa7b0" stroke-width="0.4"/></svg>
<div style="top:637.91px;height:17.78px;line-height:17.78px;font-size:12.70px;color:#c6c6c6;white-space:pre;left:132.10px;letter-spacing:0.04px;">AndroidManifest.xml</div>
<svg style="left:116.10px;top:658.02px;width:13.20px;height:12.80px;" viewBox="0 0 6.6 6.4"><path d="M0.8 0.2 H4.2 L5.6 1.6 V6 H0.8 Z" fill="#9aa7b0"/><path d="M1.8 2.6 H4.6 M1.8 3.8 H4.6 M1.8 5 H4.6" stroke="#3c3f41" stroke-width="0.5"/></svg>
<div style="top:656.03px;height:17.78px;line-height:17.78px;font-size:12.70px;color:#c6c6c6;white-space:pre;left:132.10px;letter-spacing:0.15px;">baseline-prof.txt</div>
<svg style="left:84.20px;top:677.55px;width:6.00px;height:9.60px;" viewBox="0 0 3 4.8"><path d="M0.4 0.4 L2.4 2.4 L0.4 4.4" fill="none" stroke="#b4b6b8" stroke-width="0.8"/></svg>
<svg style="left:99.20px;top:676.55px;width:13.60px;height:12.40px;" viewBox="0 0 6.8 6.2"><path d="M0 0.3 H2.4 L3.1 1.2 H6.4 V5.4 H0 Z" fill="#87939a"/><rect x="3.8" y="3.2" width="2.8" height="2.8" fill="#3c3f41"/><rect x="4.2" y="3.6" width="2.4" height="2.4" fill="#3ea6e0"/></svg>
<div style="top:674.16px;height:17.78px;line-height:17.78px;font-size:12.70px;color:#a4a4a4;white-space:pre;left:115.60px;letter-spacing:0.38px;">test</div>
<div style="top:674.16px;height:17.78px;line-height:17.78px;font-size:12.70px;color:#c6c6c6;white-space:pre;left:141.00px;font-weight:bold;letter-spacing:0.13px;">[unitTest]</div>
<svg style="left:83.10px;top:694.28px;width:13.20px;height:12.80px;" viewBox="0 0 6.6 6.4"><path d="M0.8 0.2 H4.2 L5.6 1.6 V6 H0.8 Z" fill="#9aa7b0"/><path d="M2 2.4 L3.6 4.4 M2 4.4 L2 2.4" stroke="#3c3f41" stroke-width="0.6"/><circle cx="5" cy="5" r="1.2" fill="#c8cacb"/></svg>
<div style="top:692.29px;height:17.78px;line-height:17.78px;font-size:12.70px;color:#c6c6c6;white-space:pre;left:99.10px;letter-spacing:0.13px;">.gitignore</div>
<svg style="left:83.10px;top:712.41px;width:13.20px;height:12.80px;" viewBox="0 0 6.6 6.4"><path d="M0.2 5 C0.2 2.8 1.6 1.8 3.2 1.8 C4 1.8 4.4 1.2 5 0.8 L6.4 2 L5.6 2.8 V5 H4.4 V4 H2.4 V5 Z" fill="#8ea0aa"/></svg>
<div style="top:710.42px;height:17.78px;line-height:17.78px;font-size:12.70px;color:#c6c6c6;white-space:pre;left:99.10px;letter-spacing:0.10px;">build.gradle</div>
<svg style="left:83.10px;top:730.54px;width:13.20px;height:12.80px;" viewBox="0 0 6.6 6.4"><path d="M0.8 0.2 H4.2 L5.6 1.6 V6 H0.8 Z" fill="#9aa7b0"/><path d="M1.8 2.6 H4.6 M1.8 3.8 H4.6 M1.8 5 H4.6" stroke="#3c3f41" stroke-width="0.5"/></svg>
<div style="top:728.55px;height:17.78px;line-height:17.78px;font-size:12.70px;color:#c6c6c6;white-space:pre;left:99.10px;letter-spacing:0.18px;">proguard-rules.pro</div>
<svg style="left:83.10px;top:748.66px;width:13.20px;height:12.80px;" viewBox="0 0 6.6 6.4"><path d="M0.8 0.2 H4.2 L5.6 1.6 V6 H0.8 Z" fill="#9aa7b0"/><path d="M1.8 2.6 H4.6 M1.8 3.8 H4.6 M1.8 5 H4.6" stroke="#3c3f41" stroke-width="0.5"/></svg>
<div style="top:746.67px;height:17.78px;line-height:17.78px;font-size:12.70px;color:#c6c6c6;white-space:pre;left:99.10px;letter-spacing:0.16px;">proguard-rules-benchmark.pro</div>
<svg style="left:51.20px;top:768.19px;width:6.00px;height:9.60px;" viewBox="0 0 3 4.8"><path d="M0.4 0.4 L2.4 2.4 L0.4 4.4" fill="none" stroke="#b4b6b8" stroke-width="0.8"/></svg>
<svg style="left:66.20px;top:767.19px;width:13.60px;height:12.40px;" viewBox="0 0 6.8 6.2"><path d="M0 0.3 H2.4 L3.1 1.2 H6.4 V5.4 H0 Z" fill="#e2592a"/></svg>
<div style="top:764.80px;height:17.78px;line-height:17.78px;font-size:12.70px;color:#848504;white-space:pre;left:82.60px;letter-spacing:0.47px;">build</div>
<svg style="left:51.20px;top:786.32px;width:6.00px;height:9.60px;" viewBox="0 0 3 4.8"><path d="M0.4 0.4 L2.4 2.4 L0.4 4.4" fill="none" stroke="#b4b6b8" stroke-width="0.8"/></svg>
<svg style="left:66.20px;top:785.32px;width:13.60px;height:12.40px;" viewBox="0 0 6.8 6.2"><path d="M0 0.3 H2.4 L3.1 1.2 H6.4 V5.4 H0 Z" fill="#87939a"/></svg>
<div style="top:782.93px;height:17.78px;line-height:17.78px;font-size:12.70px;color:#c6c6c6;white-space:pre;left:82.60px;letter-spacing:0.15px;">gradle</div>
<svg style="left:51.20px;top:804.45px;width:6.00px;height:9.60px;" viewBox="0 0 3 4.8"><path d="M0.4 0.4 L2.4 2.4 L0.4 4.4" fill="none" stroke="#b4b6b8" stroke-width="0.8"/></svg>
<svg style="left:66.20px;top:803.45px;width:13.60px;height:12.40px;" viewBox="0 0 6.8 6.2"><path d="M0 0.3 H2.4 L3.1 1.2 H6.4 V5.4 H0 Z" fill="#2fc18a"/></svg>
<div style="top:801.06px;height:17.78px;line-height:17.78px;font-size:12.70px;color:#d8d8d8;white-space:pre;left:82.60px;font-weight:bold;letter-spacing:0.02px;">macrobenchmark</div>
<svg style="left:51.20px;top:822.58px;width:6.00px;height:9.60px;" viewBox="0 0 3 4.8"><path d="M0.4 0.4 L2.4 2.4 L0.4 4.4" fill="none" stroke="#b4b6b8" stroke-width="0.8"/></svg>
<svg style="left:66.20px;top:821.58px;width:13.60px;height:12.40px;" viewBox="0 0 6.8 6.2"><path d="M0 0.3 H2.4 L3.1 1.2 H6.4 V5.4 H0 Z" fill="#87939a"/></svg>
<div style="top:819.19px;height:17.78px;line-height:17.78px;font-size:12.70px;color:#c6c6c6;white-space:pre;left:82.60px;letter-spacing:0.10px;">screenshots</div>
<svg style="left:66.60px;top:839.30px;width:13.20px;height:12.80px;" viewBox="0 0 6.6 6.4"><path d="M0.8 0.2 H4.2 L5.6 1.6 V6 H0.8 Z" fill="#9aa7b0"/><path d="M2 2.4 L3.6 4.4 M2 4.4 L2 2.4" stroke="#3c3f41" stroke-width="0.6"/><circle cx="5" cy="5" r="1.2" fill="#c8cacb"/></svg>
<div style="top:837.31px;height:17.78px;line-height:17.78px;font-size:12.70px;color:#c6c6c6;white-space:pre;left:82.60px;letter-spacing:0.20px;">.gitignore</div>
<svg style="left:66.60px;top:857.43px;width:13.20px;height:12.80px;" viewBox="0 0 6.6 6.4"><path d="M0.8 0.2 H4.2 L5.6 1.6 V6 H0.8 Z" fill="#9aa7b0"/><path d="M1.8 2.6 H4.6 M1.8 3.8 H4.6 M1.8 5 H4.6" stroke="#3c3f41" stroke-width="0.5"/></svg>
<div style="top:855.44px;height:17.78px;line-height:17.78px;font-size:12.70px;color:#c6c6c6;white-space:pre;left:82.60px;letter-spacing:-0.68px;">ASSETS_LICENSE</div>
<svg style="left:66.60px;top:875.56px;width:13.20px;height:12.80px;" viewBox="0 0 6.6 6.4"><path d="M0.2 5 C0.2 2.8 1.6 1.8 3.2 1.8 C4 1.8 4.4 1.2 5 0.8 L6.4 2 L5.6 2.8 V5 H4.4 V4 H2.4 V5 Z" fill="#8ea0aa"/></svg>
<div style="top:873.57px;height:17.78px;line-height:17.78px;font-size:12.70px;color:#c6c6c6;white-space:pre;left:82.60px;letter-spacing:0.14px;">build.gradle</div>
<svg style="left:66.60px;top:893.69px;width:13.20px;height:12.80px;" viewBox="0 0 6.6 6.4"><rect x="0.2" y="3.2" width="6.2" height="3" fill="#1d9bc0"/><path d="M1.4 0.2 H4 L5.2 1.4 V3.2 H1.4 Z" fill="#9aa7b0"/></svg>
<div style="top:891.70px;height:17.78px;line-height:17.78px;font-size:12.70px;color:#c6c6c6;white-space:pre;left:82.60px;letter-spacing:-0.35px;">CONTRIBUTING.md</div>
<svg style="left:66.60px;top:911.82px;width:13.20px;height:12.80px;" viewBox="0 0 6.6 6.4"><path d="M0.8 0.2 H4.2 L5.6 1.6 V6 H0.8 Z" fill="#9aa7b0"/><rect x="1" y="3.8" width="1.5" height="2.4" fill="#e05555"/><rect x="2.6" y="3" width="1.5" height="3.2" fill="#e0a030"/><rect x="4.2" y="2.2" width="1.5" height="4" fill="#59a869"/></svg>
<div style="top:909.83px;height:17.78px;line-height:17.78px;font-size:12.70px;color:#c6c6c6;white-space:pre;left:82.60px;letter-spacing:0.19px;">gradle.properties</div>
<div style="left:406.40px;top:34.80px;width:1103.60px;height:25.20px;background:#3c3f41;"></div>
<div style="left:406.00px;top:35.40px;width:111.20px;height:24.60px;background:#4a5c4f;"></div>
<div style="left:406.00px;top:57.00px;width:111.20px;height:3.00px;background:#3a8ccb;"></div>
<div style="left:406.40px;top:60.00px;width:1103.60px;height:0.80px;background:#323232;"></div>
<svg style="left:413.40px;top:40.60px;width:13.60px;height:13.60px;" viewBox="0 0 10 10"><circle cx="5" cy="5" r="4.7" fill="#1fa3bd"/><text x="4.9" y="7.3" font-size="6.4" font-weight="bold" text-anchor="middle" fill="#17798c" font-family="Liberation Sans, sans-serif">C</text><path d="M6.6 0 L9.8 1.7 L6.6 3.4 Z" fill="#59a869"/><rect x="6.2" y="0" width="1.2" height="3.2" fill="#e05555"/></svg>
<div style="top:40.16px;height:15.68px;line-height:15.68px;font-size:11.20px;color:#5b9a56;white-space:pre;left:431.60px;letter-spacing:-0.58px;">ToastTest.java</div>
<svg style="left:503.20px;top:44.60px;width:6.40px;height:6.40px;" viewBox="0 0 3.2 3.2"><path d="M0.3 0.3 L2.9 2.9 M2.9 0.3 L0.3 2.9" stroke="#7f8b83" stroke-width="0.5"/></svg>
<div style="left:406.40px;top:60.80px;width:1103.60px;height:862.40px;background:#2b2b2b;overflow:hidden;"></div>
<div style="left:406.40px;top:60.80px;width:51.40px;height:862.40px;background:#313335;"></div>
<div style="left:457.80px;top:60.80px;width:1052.20px;height:27.00px;background:#323232;"></div>
<div style="left:457.30px;top:60.80px;width:0.90px;height:862.40px;background:#4b4b4b;"></div>
<div style="left:1170.00px;top:60.80px;width:0.80px;height:862.40px;background:#3a3a3a;"></div>
<div style="left:491.41px;top:147.58px;width:0.80px;height:737.71px;background:#393939;"></div>
<div style="left:519.62px;top:267.21px;width:0.80px;height:119.63px;background:#393939;"></div>
<div style="left:547.82px;top:287.15px;width:0.80px;height:79.75px;background:#393939;"></div>
<div style="left:519.62px;top:586.22px;width:0.80px;height:39.88px;background:#393939;"></div>
<div style="left:519.62px;top:825.47px;width:0.80px;height:39.88px;background:#393939;"></div>
<div style="top:69.88px;height:17.64px;line-height:17.64px;font-size:12.60px;color:#5a5d60;white-space:pre;left:410.20px;font-family:"DejaVu Sans Mono", "Liberation Mono", monospace;letter-spacing:-1.19px;">19</div>
<div class="code" style="left:463.60px;top:68.73px;height:19.94px;line-height:19.94px;font-size:12.42px;letter-spacing:-0.42px;color:#a9b7c6;white-space:pre;"><span style="color:#cc7832;">import</span> <span style="background:#3c3f41;color:#8c8c8c;">...</span></div>
<div style="top:89.82px;height:17.64px;line-height:17.64px;font-size:12.60px;color:#5a5d60;white-space:pre;left:410.20px;font-family:"DejaVu Sans Mono", "Liberation Mono", monospace;letter-spacing:-1.19px;">44</div>
<div class="code" style="left:463.60px;top:88.67px;height:19.94px;line-height:19.94px;font-size:12.42px;letter-spacing:-0.42px;color:#a9b7c6;white-space:pre;"><span style="color:#bbb529;">@RunWith</span>(AndroidJUnit4.<span style="color:#cc7832;">class</span>)</div>
<div style="top:109.76px;height:17.64px;line-height:17.64px;font-size:12.60px;color:#5a5d60;white-space:pre;left:410.20px;font-family:"DejaVu Sans Mono", "Liberation Mono", monospace;letter-spacing:-1.19px;">45</div>
<div class="code" style="left:463.60px;top:108.61px;height:19.94px;line-height:19.94px;font-size:12.42px;letter-spacing:-0.42px;color:#a9b7c6;white-space:pre;"><span style="color:#bbb529;">@LargeTest</span></div>
<div style="top:129.69px;height:17.64px;line-height:17.64px;font-size:12.60px;color:#5a5d60;white-space:pre;left:410.20px;font-family:"DejaVu Sans Mono", "Liberation Mono", monospace;letter-spacing:-1.19px;">46</div>
<div class="code" style="left:463.60px;top:128.54px;height:19.94px;line-height:19.94px;font-size:12.42px;letter-spacing:-0.42px;color:#a9b7c6;white-space:pre;"><span style="color:#cc7832;">public class </span>ToastTest {</div>
<div style="top:149.63px;height:17.64px;line-height:17.64px;font-size:12.60px;color:#5a5d60;white-space:pre;left:410.20px;font-family:"DejaVu Sans Mono", "Liberation Mono", monospace;letter-spacing:-1.19px;">47</div>
<div class="code" style="left:463.60px;top:148.48px;height:19.94px;line-height:19.94px;font-size:12.42px;letter-spacing:-0.42px;color:#a9b7c6;white-space:pre;">    <span style="color:#bbb529;">@Rule</span></div>
<div style="top:169.57px;height:17.64px;line-height:17.64px;font-size:12.60px;color:#5a5d60;white-space:pre;left:410.20px;font-family:"DejaVu Sans Mono", "Liberation Mono", monospace;letter-spacing:-1.19px;">48</div>
<div class="code" style="left:463.60px;top:168.42px;height:19.94px;line-height:19.94px;font-size:12.42px;letter-spacing:-0.42px;color:#a9b7c6;white-space:pre;">    <span style="color:#cc7832;">public </span>ActivityScenarioRule&lt;GardenActivity&gt; <span style="color:#9876aa;">activityRule</span> =</div>
<div style="top:189.51px;height:17.64px;line-height:17.64px;font-size:12.60px;color:#5a5d60;white-space:pre;left:410.20px;font-family:"DejaVu Sans Mono", "Liberation Mono", monospace;letter-spacing:-1.19px;">49</div>
<div class="code" style="left:463.60px;top:188.36px;height:19.94px;line-height:19.94px;font-size:12.42px;letter-spacing:-0.42px;color:#a9b7c6;white-space:pre;">            <span style="color:#cc7832;">new </span>ActivityScenarioRule&lt;&gt;(GardenActivity.<span style="color:#cc7832;">class</span>)<span style="color:#cc7832;">;</span></div>
<div style="top:209.45px;height:17.64px;line-height:17.64px;font-size:12.60px;color:#5a5d60;white-space:pre;left:410.20px;font-family:"DejaVu Sans Mono", "Liberation Mono", monospace;letter-spacing:-1.19px;">50</div>
<div class="code" style="left:463.60px;top:208.30px;height:19.94px;line-height:19.94px;font-size:12.42px;letter-spacing:-0.42px;color:#a9b7c6;white-space:pre;">    <span style="color:#cc7832;">private </span>View <span style="color:#9876aa;">decorView</span><span style="color:#cc7832;">;</span></div>
<div style="top:229.38px;height:17.64px;line-height:17.64px;font-size:12.60px;color:#5a5d60;white-space:pre;left:410.20px;font-family:"DejaVu Sans Mono", "Liberation Mono", monospace;letter-spacing:-1.19px;">51</div>
<div class="code" style="left:463.60px;top:228.23px;height:19.94px;line-height:19.94px;font-size:12.42px;letter-spacing:-0.42px;color:#a9b7c6;white-space:pre;">    <span style="color:#bbb529;">@Before</span></div>
<div style="top:249.32px;height:17.64px;line-height:17.64px;font-size:12.60px;color:#5a5d60;white-space:pre;left:410.20px;font-family:"DejaVu Sans Mono", "Liberation Mono", monospace;letter-spacing:-1.19px;">52</div>
<div class="code" style="left:463.60px;top:248.17px;height:19.94px;line-height:19.94px;font-size:12.42px;letter-spacing:-0.42px;color:#a9b7c6;white-space:pre;">    <span style="color:#cc7832;">public void </span><span style="color:#ffc66d;">setUp</span>() {</div>
<div style="top:269.26px;height:17.64px;line-height:17.64px;font-size:12.60px;color:#5a5d60;white-space:pre;left:410.20px;font-family:"DejaVu Sans Mono", "Liberation Mono", monospace;letter-spacing:-1.19px;">53</div>
<div class="code" style="left:463.60px;top:268.11px;height:19.94px;line-height:19.94px;font-size:12.42px;letter-spacing:-0.42px;color:#a9b7c6;white-space:pre;">        <span style="color:#9876aa;">activityRule</span>.getScenario().onActivity(<span style="color:#8b939b;">new ActivityScenario.ActivityAction&lt;GardenActivity&gt;()</span> {</div>
<div style="top:289.20px;height:17.64px;line-height:17.64px;font-size:12.60px;color:#5a5d60;white-space:pre;left:410.20px;font-family:"DejaVu Sans Mono", "Liberation Mono", monospace;letter-spacing:-1.19px;">54</div>
<div class="code" style="left:463.60px;top:288.05px;height:19.94px;line-height:19.94px;font-size:12.42px;letter-spacing:-0.42px;color:#a9b7c6;white-space:pre;">            <span style="color:#bbb529;">@Override</span></div>
<div style="top:309.14px;height:17.64px;line-height:17.64px;font-size:12.60px;color:#5a5d60;white-space:pre;left:410.20px;font-family:"DejaVu Sans Mono", "Liberation Mono", monospace;letter-spacing:-1.19px;">55</div>
<div class="code" style="left:463.60px;top:307.99px;height:19.94px;line-height:19.94px;font-size:12.42px;letter-spacing:-0.42px;color:#a9b7c6;white-space:pre;">            <span style="color:#cc7832;">public void </span><span style="color:#ffc66d;">perform</span>(GardenActivity activity) {</div>
<div style="top:329.07px;height:17.64px;line-height:17.64px;font-size:12.60px;color:#5a5d60;white-space:pre;left:410.20px;font-family:"DejaVu Sans Mono", "Liberation Mono", monospace;letter-spacing:-1.19px;">56</div>
<div class="code" style="left:463.60px;top:327.92px;height:19.94px;line-height:19.94px;font-size:12.42px;letter-spacing:-0.42px;color:#a9b7c6;white-space:pre;">                <span style="color:#9876aa;">decorView</span> = activity.getWindow().getDecorView()<span style="color:#cc7832;">;</span></div>
<div style="top:349.01px;height:17.64px;line-height:17.64px;font-size:12.60px;color:#5a5d60;white-space:pre;left:410.20px;font-family:"DejaVu Sans Mono", "Liberation Mono", monospace;letter-spacing:-1.19px;">57</div>
<div class="code" style="left:463.60px;top:347.86px;height:19.94px;line-height:19.94px;font-size:12.42px;letter-spacing:-0.42px;color:#a9b7c6;white-space:pre;">            }</div>
<div style="top:368.95px;height:17.64px;line-height:17.64px;font-size:12.60px;color:#5a5d60;white-space:pre;left:410.20px;font-family:"DejaVu Sans Mono", "Liberation Mono", monospace;letter-spacing:-1.19px;">58</div>
<div class="code" style="left:463.60px;top:367.80px;height:19.94px;line-height:19.94px;font-size:12.42px;letter-spacing:-0.42px;color:#a9b7c6;white-space:pre;">        })<span style="color:#cc7832;">;</span></div>
<div style="top:388.89px;height:17.64px;line-height:17.64px;font-size:12.60px;color:#5a5d60;white-space:pre;left:410.20px;font-family:"DejaVu Sans Mono", "Liberation Mono", monospace;letter-spacing:-1.19px;">59</div>
<div class="code" style="left:463.60px;top:387.74px;height:19.94px;line-height:19.94px;font-size:12.42px;letter-spacing:-0.42px;color:#a9b7c6;white-space:pre;">    }</div>
<div style="top:408.83px;height:17.64px;line-height:17.64px;font-size:12.60px;color:#5a5d60;white-space:pre;left:410.20px;font-family:"DejaVu Sans Mono", "Liberation Mono", monospace;letter-spacing:-1.19px;">60</div>
<div class="code" style="left:463.60px;top:407.68px;height:19.94px;line-height:19.94px;font-size:12.42px;letter-spacing:-0.42px;color:#a9b7c6;white-space:pre;">    <span style="color:#808080;">//Test if the Toast Message is Displayed</span></div>
<div style="top:428.76px;height:17.64px;line-height:17.64px;font-size:12.60px;color:#5a5d60;white-space:pre;left:410.20px;font-family:"DejaVu Sans Mono", "Liberation Mono", monospace;letter-spacing:-1.19px;">61</div>
<div class="code" style="left:463.60px;top:427.61px;height:19.94px;line-height:19.94px;font-size:12.42px;letter-spacing:-0.42px;color:#a9b7c6;white-space:pre;">    <span style="color:#bbb529;">@Test</span></div>
<div style="top:448.70px;height:17.64px;line-height:17.64px;font-size:12.60px;color:#5a5d60;white-space:pre;left:410.20px;font-family:"DejaVu Sans Mono", "Liberation Mono", monospace;letter-spacing:-1.19px;">62</div>
<div class="code" style="left:463.60px;top:447.55px;height:19.94px;line-height:19.94px;font-size:12.42px;letter-spacing:-0.42px;color:#a9b7c6;white-space:pre;">    <span style="color:#cc7832;">public void </span><span style="color:#ffc66d;">testValidToast</span>() {</div>
<div style="top:468.64px;height:17.64px;line-height:17.64px;font-size:12.60px;color:#5a5d60;white-space:pre;left:410.20px;font-family:"DejaVu Sans Mono", "Liberation Mono", monospace;letter-spacing:-1.19px;">63</div>
<div class="code" style="left:463.60px;top:467.49px;height:19.94px;line-height:19.94px;font-size:12.42px;letter-spacing:-0.42px;color:#a9b7c6;white-space:pre;">        <span style="color:#808080;">// Given that no Plants are added to the user&#x27;s garden</span></div>
<div style="top:488.58px;height:17.64px;line-height:17.64px;font-size:12.60px;color:#5a5d60;white-space:pre;left:410.20px;font-family:"DejaVu Sans Mono", "Liberation Mono", monospace;letter-spacing:-1.19px;">64</div>
<div style="top:508.52px;height:17.64px;line-height:17.64px;font-size:12.60px;color:#5a5d60;white-space:pre;left:410.20px;font-family:"DejaVu Sans Mono", "Liberation Mono", monospace;letter-spacing:-1.19px;">65</div>
<div class="code" style="left:463.60px;top:507.37px;height:19.94px;line-height:19.94px;font-size:12.42px;letter-spacing:-0.42px;color:#a9b7c6;white-space:pre;">        <span style="color:#808080;">// When the &quot;Add Plant&quot; button is clicked(Yellow Button)</span></div>
<div style="top:528.45px;height:17.64px;line-height:17.64px;font-size:12.60px;color:#5a5d60;white-space:pre;left:410.20px;font-family:"DejaVu Sans Mono", "Liberation Mono", monospace;letter-spacing:-1.19px;">66</div>
<div class="code" style="left:463.60px;top:527.30px;height:19.94px;line-height:19.94px;font-size:12.42px;letter-spacing:-0.42px;color:#a9b7c6;white-space:pre;">        <span style="color:#a9b7c6;font-style:italic;">onView</span>(<span style="color:#a9b7c6;font-style:italic;">withId</span>(R.id.<span style="color:#9876aa;font-style:italic;">add_plant</span>)).perform(<span style="color:#a9b7c6;font-style:italic;">click</span>())<span style="color:#cc7832;">;</span></div>
<div style="top:548.39px;height:17.64px;line-height:17.64px;font-size:12.60px;color:#5a5d60;white-space:pre;left:410.20px;font-family:"DejaVu Sans Mono", "Liberation Mono", monospace;letter-spacing:-1.19px;">67</div>
<div class="code" style="left:463.60px;top:547.24px;height:19.94px;line-height:19.94px;font-size:12.42px;letter-spacing:-0.42px;color:#a9b7c6;white-space:pre;">        <span style="color:#808080;">//Verify Toast is Displayed After clicking the Plant List Fragment</span></div>
<div style="top:568.33px;height:17.64px;line-height:17.64px;font-size:12.60px;color:#5a5d60;white-space:pre;left:410.20px;font-family:"DejaVu Sans Mono", "Liberation Mono", monospace;letter-spacing:-1.19px;">68</div>
<div class="code" style="left:463.60px;top:567.18px;height:19.94px;line-height:19.94px;font-size:12.42px;letter-spacing:-0.42px;color:#a9b7c6;white-space:pre;">        <span style="color:#a9b7c6;font-style:italic;">onView</span>(<span style="color:#a9b7c6;font-style:italic;">withText</span>(<span style="color:#6a8759;">&quot;Welcome For The Visit&quot;</span>))</div>
<div style="top:588.27px;height:17.64px;line-height:17.64px;font-size:12.60px;color:#5a5d60;white-space:pre;left:410.20px;font-family:"DejaVu Sans Mono", "Liberation Mono", monospace;letter-spacing:-1.19px;">69</div>
<div class="code" style="left:463.60px;top:587.12px;height:19.94px;line-height:19.94px;font-size:12.42px;letter-spacing:-0.42px;color:#a9b7c6;white-space:pre;">                .inRoot(<span style="color:#a9b7c6;font-style:italic;">withDecorView</span>(Matchers.<span style="color:#a9b7c6;font-style:italic;">not</span>(<span style="color:#9876aa;">decorView</span>)))<span style="color:#808080;">// Here we use decorView</span></div>
<div style="top:608.21px;height:17.64px;line-height:17.64px;font-size:12.60px;color:#5a5d60;white-space:pre;left:410.20px;font-family:"DejaVu Sans Mono", "Liberation Mono", monospace;letter-spacing:-1.19px;">70</div>
<div class="code" style="left:463.60px;top:607.06px;height:19.94px;line-height:19.94px;font-size:12.42px;letter-spacing:-0.42px;color:#a9b7c6;white-space:pre;">                .check(<span style="color:#a9b7c6;font-style:italic;">matches</span>(<span style="color:#a9b7c6;font-style:italic;">isDisplayed</span>()))<span style="color:#cc7832;">;</span></div>
<div style="top:628.14px;height:17.64px;line-height:17.64px;font-size:12.60px;color:#5a5d60;white-space:pre;left:410.20px;font-family:"DejaVu Sans Mono", "Liberation Mono", monospace;letter-spacing:-1.19px;">71</div>
<div class="code" style="left:463.60px;top:626.99px;height:19.94px;line-height:19.94px;font-size:12.42px;letter-spacing:-0.42px;color:#a9b7c6;white-space:pre;">    }</div>
<div style="top:648.08px;height:17.64px;line-height:17.64px;font-size:12.60px;color:#5a5d60;white-space:pre;left:410.20px;font-family:"DejaVu Sans Mono", "Liberation Mono", monospace;letter-spacing:-1.19px;">72</div>
<div class="code" style="left:463.60px;top:646.93px;height:19.94px;line-height:19.94px;font-size:12.42px;letter-spacing:-0.42px;color:#a9b7c6;white-space:pre;">    <span style="color:#808080;">//Test if the Toast Message is not Displayed</span></div>
<div style="top:668.02px;height:17.64px;line-height:17.64px;font-size:12.60px;color:#5a5d60;white-space:pre;left:410.20px;font-family:"DejaVu Sans Mono", "Liberation Mono", monospace;letter-spacing:-1.19px;">73</div>
<div class="code" style="left:463.60px;top:666.87px;height:19.94px;line-height:19.94px;font-size:12.42px;letter-spacing:-0.42px;color:#a9b7c6;white-space:pre;">    <span style="color:#bbb529;">@Test</span></div>
<div style="top:687.96px;height:17.64px;line-height:17.64px;font-size:12.60px;color:#5a5d60;white-space:pre;left:410.20px;font-family:"DejaVu Sans Mono", "Liberation Mono", monospace;letter-spacing:-1.19px;">74</div>
<div class="code" style="left:463.60px;top:686.81px;height:19.94px;line-height:19.94px;font-size:12.42px;letter-spacing:-0.42px;color:#a9b7c6;white-space:pre;">    <span style="color:#cc7832;">public void </span><span style="color:#ffc66d;">testToastNotDisplayed</span>() {</div>
<div style="top:707.90px;height:17.64px;line-height:17.64px;font-size:12.60px;color:#5a5d60;white-space:pre;left:410.20px;font-family:"DejaVu Sans Mono", "Liberation Mono", monospace;letter-spacing:-1.19px;">75</div>
<div class="code" style="left:463.60px;top:706.75px;height:19.94px;line-height:19.94px;font-size:12.42px;letter-spacing:-0.42px;color:#a9b7c6;white-space:pre;">        <span style="color:#808080;">// Given that no Plants are added to the user&#x27;s garden</span></div>
<div style="top:727.83px;height:17.64px;line-height:17.64px;font-size:12.60px;color:#5a5d60;white-space:pre;left:410.20px;font-family:"DejaVu Sans Mono", "Liberation Mono", monospace;letter-spacing:-1.19px;">76</div>
<div style="top:747.77px;height:17.64px;line-height:17.64px;font-size:12.60px;color:#5a5d60;white-space:pre;left:410.20px;font-family:"DejaVu Sans Mono", "Liberation Mono", monospace;letter-spacing:-1.19px;">77</div>
<div class="code" style="left:463.60px;top:746.62px;height:19.94px;line-height:19.94px;font-size:12.42px;letter-spacing:-0.42px;color:#a9b7c6;white-space:pre;">        <span style="color:#808080;">// When the &quot;Add Plant&quot; button is clicked(Yellow Button)</span></div>
<div style="top:767.71px;height:17.64px;line-height:17.64px;font-size:12.60px;color:#5a5d60;white-space:pre;left:410.20px;font-family:"DejaVu Sans Mono", "Liberation Mono", monospace;letter-spacing:-1.19px;">78</div>
<div class="code" style="left:463.60px;top:766.56px;height:19.94px;line-height:19.94px;font-size:12.42px;letter-spacing:-0.42px;color:#a9b7c6;white-space:pre;">        <span style="color:#a9b7c6;font-style:italic;">onView</span>(<span style="color:#a9b7c6;font-style:italic;">withId</span>(R.id.<span style="color:#9876aa;font-style:italic;">add_plant</span>)).perform(<span style="color:#a9b7c6;font-style:italic;">click</span>())<span style="color:#cc7832;">;</span></div>
<div style="top:787.65px;height:17.64px;line-height:17.64px;font-size:12.60px;color:#5a5d60;white-space:pre;left:410.20px;font-family:"DejaVu Sans Mono", "Liberation Mono", monospace;letter-spacing:-1.19px;">79</div>
<div class="code" style="left:463.60px;top:786.50px;height:19.94px;line-height:19.94px;font-size:12.42px;letter-spacing:-0.42px;color:#a9b7c6;white-space:pre;">        <span style="color:#808080;">//Verify Toast is Displayed After clicking the Plant List Fragment</span></div>
<div style="top:807.59px;height:17.64px;line-height:17.64px;font-size:12.60px;color:#5a5d60;white-space:pre;left:410.20px;font-family:"DejaVu Sans Mono", "Liberation Mono", monospace;letter-spacing:-1.19px;">80</div>
<div class="code" style="left:463.60px;top:806.44px;height:19.94px;line-height:19.94px;font-size:12.42px;letter-spacing:-0.42px;color:#a9b7c6;white-space:pre;">        <span style="color:#a9b7c6;font-style:italic;">onView</span>(<span style="color:#a9b7c6;font-style:italic;">withText</span>(<span style="color:#6a8759;">&quot;Your Toast&quot;</span>))</div>
<div style="top:827.52px;height:17.64px;line-height:17.64px;font-size:12.60px;color:#5a5d60;white-space:pre;left:410.20px;font-family:"DejaVu Sans Mono", "Liberation Mono", monospace;letter-spacing:-1.19px;">81</div>
<div class="code" style="left:463.60px;top:826.37px;height:19.94px;line-height:19.94px;font-size:12.42px;letter-spacing:-0.42px;color:#a9b7c6;white-space:pre;">                .inRoot(<span style="color:#a9b7c6;font-style:italic;">withDecorView</span>(Matchers.<span style="color:#a9b7c6;font-style:italic;">not</span>(<span style="color:#9876aa;">decorView</span>)))<span style="color:#808080;">// Here we use decorView</span></div>
<div style="top:847.46px;height:17.64px;line-height:17.64px;font-size:12.60px;color:#5a5d60;white-space:pre;left:410.20px;font-family:"DejaVu Sans Mono", "Liberation Mono", monospace;letter-spacing:-1.19px;">82</div>
<div class="code" style="left:463.60px;top:846.31px;height:19.94px;line-height:19.94px;font-size:12.42px;letter-spacing:-0.42px;color:#a9b7c6;white-space:pre;">                .check(<span style="color:#a9b7c6;font-style:italic;">matches</span>(<span style="color:#a9b7c6;font-style:italic;">not</span>(<span style="color:#a9b7c6;font-style:italic;">isDisplayed</span>())))<span style="color:#cc7832;">;</span></div>
<div style="top:867.40px;height:17.64px;line-height:17.64px;font-size:12.60px;color:#5a5d60;white-space:pre;left:410.20px;font-family:"DejaVu Sans Mono", "Liberation Mono", monospace;letter-spacing:-1.19px;">83</div>
<div class="code" style="left:463.60px;top:866.25px;height:19.94px;line-height:19.94px;font-size:12.42px;letter-spacing:-0.42px;color:#a9b7c6;white-space:pre;">    }</div>
<div style="top:887.34px;height:17.64px;line-height:17.64px;font-size:12.60px;color:#5a5d60;white-space:pre;left:410.20px;font-family:"DejaVu Sans Mono", "Liberation Mono", monospace;letter-spacing:-1.19px;">84</div>
<div class="code" style="left:463.60px;top:886.19px;height:19.94px;line-height:19.94px;font-size:12.42px;letter-spacing:-0.42px;color:#a9b7c6;white-space:pre;">}</div>
<div style="top:907.28px;height:17.64px;line-height:17.64px;font-size:12.60px;color:#5a5d60;white-space:pre;left:410.20px;font-family:"DejaVu Sans Mono", "Liberation Mono", monospace;letter-spacing:-1.19px;">85</div>
<div style="left:534.52px;top:70.00px;width:1.10px;height:15.60px;background:#bbbbbb;"></div>
<svg style="left:430.80px;top:132.01px;width:13.60px;height:11.20px;" viewBox="0 0 6.8 5.6"><path d="M0.2 0.2 L3.6 2.8 L0.2 5.4 Z" fill="#2fa84f"/><path d="M3 0.2 L6.6 2.8 L3 5.4 Z" fill="#2fa84f"/></svg>
<svg style="left:432.00px;top:451.02px;width:10.40px;height:11.20px;" viewBox="0 0 5.2 5.6"><path d="M0.2 0.2 L5 2.8 L0.2 5.4 Z" fill="#2fa84f"/></svg>
<svg style="left:432.00px;top:690.28px;width:10.40px;height:11.20px;" viewBox="0 0 5.2 5.6"><path d="M0.2 0.2 L5 2.8 L0.2 5.4 Z" fill="#2fa84f"/></svg>
<svg style="left:429.20px;top:311.86px;width:12.80px;height:10.40px;" viewBox="0 0 6.4 5.2"><circle cx="2.4" cy="2.8" r="2" fill="#2fa84f"/><path d="M5.2 5 V0.6 M4 1.8 L5.2 0.4 L6.3 1.8" fill="none" stroke="#e05555" stroke-width="0.7"/></svg>
<svg style="left:453.40px;top:74.20px;width:8.80px;height:8.80px;" viewBox="0 0 4.4 4.4"><rect x="0.3" y="0.3" width="3.8" height="3.8" fill="#2b2b2b" stroke="#55585a" stroke-width="0.45"/><path d="M1.1 2.2 H3.3 M2.2 1.1 V3.3" stroke="#55585a" stroke-width="0.45"/></svg>
<svg style="left:453.60px;top:93.34px;width:8.40px;height:10.80px;" viewBox="0 0 4.2 5.4"><path d="M0.4 0.4 H3.8 V3.4 L2.1 5.0 L0.4 3.4 Z" fill="#2b2b2b" stroke="#505355" stroke-width="0.45"/><path d="M1.2 2.2 H3.0" stroke="#505355" stroke-width="0.45"/></svg>
<svg style="left:453.60px;top:113.28px;width:8.40px;height:10.80px;" viewBox="0 0 4.2 5.4"><path d="M0.4 5.0 H3.8 V2 L2.1 0.4 L0.4 2 Z" fill="#2b2b2b" stroke="#505355" stroke-width="0.45"/><path d="M1.2 3.2 H3.0" stroke="#505355" stroke-width="0.45"/></svg>
<svg style="left:453.60px;top:252.84px;width:8.40px;height:10.80px;" viewBox="0 0 4.2 5.4"><path d="M0.4 0.4 H3.8 V3.4 L2.1 5.0 L0.4 3.4 Z" fill="#2b2b2b" stroke="#505355" stroke-width="0.45"/><path d="M1.2 2.2 H3.0" stroke="#505355" stroke-width="0.45"/></svg>
<svg style="left:453.60px;top:272.78px;width:8.40px;height:10.80px;" viewBox="0 0 4.2 5.4"><path d="M0.4 0.4 H3.8 V3.4 L2.1 5.0 L0.4 3.4 Z" fill="#2b2b2b" stroke="#505355" stroke-width="0.45"/><path d="M1.2 2.2 H3.0" stroke="#505355" stroke-width="0.45"/></svg>
<svg style="left:453.60px;top:312.66px;width:8.40px;height:10.80px;" viewBox="0 0 4.2 5.4"><path d="M0.4 0.4 H3.8 V3.4 L2.1 5.0 L0.4 3.4 Z" fill="#2b2b2b" stroke="#505355" stroke-width="0.45"/><path d="M1.2 2.2 H3.0" stroke="#505355" stroke-width="0.45"/></svg>
<svg style="left:453.60px;top:452.22px;width:8.40px;height:10.80px;" viewBox="0 0 4.2 5.4"><path d="M0.4 0.4 H3.8 V3.4 L2.1 5.0 L0.4 3.4 Z" fill="#2b2b2b" stroke="#505355" stroke-width="0.45"/><path d="M1.2 2.2 H3.0" stroke="#505355" stroke-width="0.45"/></svg>
<svg style="left:453.60px;top:691.48px;width:8.40px;height:10.80px;" viewBox="0 0 4.2 5.4"><path d="M0.4 0.4 H3.8 V3.4 L2.1 5.0 L0.4 3.4 Z" fill="#2b2b2b" stroke="#505355" stroke-width="0.45"/><path d="M1.2 2.2 H3.0" stroke="#505355" stroke-width="0.45"/></svg>
<svg style="left:453.60px;top:352.53px;width:8.40px;height:10.80px;" viewBox="0 0 4.2 5.4"><path d="M0.4 5.0 H3.8 V2 L2.1 0.4 L0.4 2 Z" fill="#2b2b2b" stroke="#505355" stroke-width="0.45"/><path d="M1.2 3.2 H3.0" stroke="#505355" stroke-width="0.45"/></svg>
<svg style="left:453.60px;top:372.47px;width:8.40px;height:10.80px;" viewBox="0 0 4.2 5.4"><path d="M0.4 5.0 H3.8 V2 L2.1 0.4 L0.4 2 Z" fill="#2b2b2b" stroke="#505355" stroke-width="0.45"/><path d="M1.2 3.2 H3.0" stroke="#505355" stroke-width="0.45"/></svg>
<svg style="left:453.60px;top:392.41px;width:8.40px;height:10.80px;" viewBox="0 0 4.2 5.4"><path d="M0.4 5.0 H3.8 V2 L2.1 0.4 L0.4 2 Z" fill="#2b2b2b" stroke="#505355" stroke-width="0.45"/><path d="M1.2 3.2 H3.0" stroke="#505355" stroke-width="0.45"/></svg>
<svg style="left:453.60px;top:631.66px;width:8.40px;height:10.80px;" viewBox="0 0 4.2 5.4"><path d="M0.4 5.0 H3.8 V2 L2.1 0.4 L0.4 2 Z" fill="#2b2b2b" stroke="#505355" stroke-width="0.45"/><path d="M1.2 3.2 H3.0" stroke="#505355" stroke-width="0.45"/></svg>
<svg style="left:453.60px;top:870.92px;width:8.40px;height:10.80px;" viewBox="0 0 4.2 5.4"><path d="M0.4 5.0 H3.8 V2 L2.1 0.4 L0.4 2 Z" fill="#2b2b2b" stroke="#505355" stroke-width="0.45"/><path d="M1.2 3.2 H3.0" stroke="#505355" stroke-width="0.45"/></svg>
<svg style="left:453.60px;top:472.16px;width:8.40px;height:10.80px;" viewBox="0 0 4.2 5.4"><path d="M0.4 0.4 H3.8 V3.4 L2.1 5.0 L0.4 3.4 Z" fill="#2b2b2b" stroke="#505355" stroke-width="0.45"/><path d="M1.2 2.2 H3.0" stroke="#505355" stroke-width="0.45"/></svg>
<svg style="left:453.60px;top:512.04px;width:8.40px;height:10.80px;" viewBox="0 0 4.2 5.4"><path d="M0.4 0.4 H3.8 V3.4 L2.1 5.0 L0.4 3.4 Z" fill="#2b2b2b" stroke="#505355" stroke-width="0.45"/><path d="M1.2 2.2 H3.0" stroke="#505355" stroke-width="0.45"/></svg>
<svg style="left:453.60px;top:711.42px;width:8.40px;height:10.80px;" viewBox="0 0 4.2 5.4"><path d="M0.4 0.4 H3.8 V3.4 L2.1 5.0 L0.4 3.4 Z" fill="#2b2b2b" stroke="#505355" stroke-width="0.45"/><path d="M1.2 2.2 H3.0" stroke="#505355" stroke-width="0.45"/></svg>
<svg style="left:453.60px;top:751.29px;width:8.40px;height:10.80px;" viewBox="0 0 4.2 5.4"><path d="M0.4 0.4 H3.8 V3.4 L2.1 5.0 L0.4 3.4 Z" fill="#2b2b2b" stroke="#505355" stroke-width="0.45"/><path d="M1.2 2.2 H3.0" stroke="#505355" stroke-width="0.45"/></svg>
<div style="left:1439.60px;top:62.00px;width:68.80px;height:19.40px;background:#2b2b2b;border-radius:2px;"></div>
<svg style="left:1445.60px;top:65.80px;width:12.80px;height:12.00px;" viewBox="0 0 6.4 6"><path d="M3.2 0.3 L6.2 5.7 H0.2 Z" fill="#e0a030"/><path d="M3.2 2 V3.9 M3.2 4.5 V5.1" stroke="#3a3320" stroke-width="0.7"/></svg>
<div style="top:63.96px;height:15.68px;line-height:15.68px;font-size:11.20px;color:#bbbbbb;white-space:pre;left:1459.60px;">5</div>
<svg style="left:1475.20px;top:69.00px;width:9.60px;height:6.00px;" viewBox="0 0 4.8 3"><path d="M0.4 2.6 L2.4 0.6 L4.4 2.6" fill="none" stroke="#afb1b3" stroke-width="0.7"/></svg>
<svg style="left:1494.00px;top:69.00px;width:9.60px;height:6.00px;" viewBox="0 0 4.8 3"><path d="M0.4 0.4 L2.4 2.4 L4.4 0.4" fill="none" stroke="#afb1b3" stroke-width="0.7"/></svg>
<div style="left:1500.80px;top:311.60px;width:6.40px;height:544.40px;background:#474747;border-radius:2px;"></div>
<div style="left:1496.40px;top:311.80px;width:13.60px;height:2.00px;background:#b8891d;"></div>
<div style="left:1496.40px;top:323.80px;width:13.60px;height:2.00px;background:#b8891d;"></div>
<div style="left:1496.40px;top:438.80px;width:13.60px;height:2.00px;background:#b8891d;"></div>
<div style="left:1510.00px;top:34.60px;width:17.70px;height:888.60px;background:#3c3f41;"></div>
<svg style="left:1513.20px;top:46.00px;width:12.00px;height:12.00px;" viewBox="0 0 6 6"><rect x="0.4" y="0.6" width="3.6" height="5" rx="0.4" fill="none" stroke="#afb1b3" stroke-width="0.7"/><rect x="2.8" y="0.2" width="3" height="3.2" fill="#3c3f41" stroke="#afb1b3" stroke-width="0.6"/></svg>
<div style="left:1481.60px;top:90.98px;width:83.20px;height:14.84px;line-height:14.84px;font-size:10.60px;color:#9da0a2;letter-spacing:-0.15px;text-align:left;white-space:pre;transform-origin:37.60px 50%;transform:rotate(90deg);">Device Manager</div>
<svg style="left:1513.20px;top:156.00px;width:12.00px;height:11.20px;" viewBox="0 0 6 5.6"><path d="M0.3 5 C0.3 3 1.6 2 3 2 C3.8 2 4.2 1.4 4.8 1 L5.8 2.2 L5.2 2.8 V5 H4.2 V4 H2.2 V5 Z" fill="#afb1b3"/></svg>
<div style="left:1504.20px;top:178.78px;width:38.00px;height:14.84px;line-height:14.84px;font-size:10.60px;color:#9da0a2;letter-spacing:-0.36px;text-align:left;white-space:pre;transform-origin:15.00px 50%;transform:rotate(90deg);">Gradle</div>
<svg style="left:1513.20px;top:730.00px;width:12.00px;height:12.00px;" viewBox="0 0 6 6"><rect x="0.5" y="0.5" width="3.8" height="5" rx="0.4" fill="none" stroke="#afb1b3" stroke-width="0.8"/><rect x="3" y="2.4" width="2.6" height="2.2" fill="#afb1b3"/></svg>
<div style="left:1473.60px;top:783.38px;width:99.20px;height:14.84px;line-height:14.84px;font-size:10.60px;color:#9da0a2;letter-spacing:-0.19px;text-align:left;white-space:pre;transform-origin:45.60px 50%;transform:rotate(90deg);">Device File Explorer</div>
<svg style="left:1513.20px;top:856.80px;width:12.80px;height:12.00px;" viewBox="0 0 6.4 6"><rect x="0.5" y="0.8" width="3.8" height="4.8" rx="0.4" fill="none" stroke="#afb1b3" stroke-width="0.8"/><circle cx="5" cy="1.2" r="1.1" fill="#2fc15a"/></svg>
<div style="left:1498.60px;top:886.38px;width:49.20px;height:14.84px;line-height:14.84px;font-size:10.60px;color:#9da0a2;letter-spacing:-0.17px;text-align:left;white-space:pre;transform-origin:20.60px 50%;transform:rotate(90deg);">Emulator</div>
<div style="left:8.60px;top:923.20px;width:1519.10px;height:37.50px;background:#3c3f41;"></div>
<div style="left:8.60px;top:922.80px;width:1519.10px;height:1.00px;background:#333537;"></div>
<div style="left:8.60px;top:943.00px;width:1519.10px;height:0.80px;background:#383a3c;"></div>
<svg style="left:36.40px;top:927.80px;width:8.00px;height:11.20px;" viewBox="0 0 4 5.6"><path d="M0.8 0.2 V5.4 M0.8 3.8 C3.2 3.8 3.2 2.4 3.2 0.8" fill="none" stroke="#afb1b3" stroke-width="0.7"/></svg>
<div style="top:926.05px;height:14.70px;line-height:14.70px;font-size:10.50px;color:#bbbbbb;white-space:pre;left:49.60px;letter-spacing:-0.01px;">Git</div>
<svg style="left:83.20px;top:929.00px;width:8.00px;height:8.80px;" viewBox="0 0 4 4.4"><path d="M0.2 0.2 L3.8 2.2 L0.2 4.2 Z" fill="#afb1b3"/></svg>
<div style="top:926.05px;height:14.70px;line-height:14.70px;font-size:10.50px;color:#bbbbbb;white-space:pre;left:98.00px;letter-spacing:-0.62px;">Run</div>
<svg style="left:131.60px;top:929.00px;width:10.00px;height:8.80px;" viewBox="0 0 5 4.4"><path d="M0 0.5 H5 M0 2.2 H5 M0 3.9 H5" stroke="#afb1b3" stroke-width="0.7"/></svg>
<div style="top:926.05px;height:14.70px;line-height:14.70px;font-size:10.50px;color:#bbbbbb;white-space:pre;left:146.40px;letter-spacing:-0.49px;">TODO</div>
<svg style="left:192.40px;top:928.20px;width:10.40px;height:10.40px;" viewBox="0 0 5.2 5.2"><circle cx="2.6" cy="2.6" r="2.5" fill="#afb1b3"/><path d="M2.6 1.1 V3 M2.6 3.7 V4.3" stroke="#3c3f41" stroke-width="0.7"/></svg>
<div style="top:926.05px;height:14.70px;line-height:14.70px;font-size:10.50px;color:#bbbbbb;white-space:pre;left:209.00px;letter-spacing:-0.24px;">Problems</div>
<svg style="left:270.00px;top:928.40px;width:11.20px;height:10.00px;" viewBox="0 0 5.6 5"><rect x="0.2" y="0.2" width="5.2" height="4.6" fill="#afb1b3"/><path d="M1.2 1.4 L2.4 2.5 L1.2 3.6 M2.9 3.6 H4.4" fill="none" stroke="#3c3f41" stroke-width="0.5"/></svg>
<div style="top:926.05px;height:14.70px;line-height:14.70px;font-size:10.50px;color:#bbbbbb;white-space:pre;left:287.00px;letter-spacing:-0.28px;">Terminal</div>
<svg style="left:342.00px;top:927.80px;width:11.60px;height:11.20px;" viewBox="0 0 5.8 5.6"><path d="M0.6 1.2 L2.4 0.4 L3.6 1.6 L3 2.3 L5.6 5 L4.8 5.6 L2.2 3 L1.6 3.6 Z" fill="#afb1b3"/></svg>
<div style="top:926.05px;height:14.70px;line-height:14.70px;font-size:10.50px;color:#bbbbbb;white-space:pre;left:358.60px;letter-spacing:-0.19px;">Build</div>
<svg style="left:397.20px;top:929.00px;width:11.20px;height:9.20px;" viewBox="0 0 5.6 4.6"><path d="M0 0.5 H5.6 M0 2.3 H3.4 M0 4.1 H5.6" stroke="#afb1b3" stroke-width="0.8"/></svg>
<div style="top:926.05px;height:14.70px;line-height:14.70px;font-size:10.50px;color:#bbbbbb;white-space:pre;left:413.60px;letter-spacing:-0.02px;">Logcat</div>
<svg style="left:463.20px;top:928.60px;width:12.40px;height:9.60px;" viewBox="0 0 6.2 4.8"><path d="M0.6 4.4 A2.6 2.6 0 0 1 5.6 4.4" fill="none" stroke="#afb1b3" stroke-width="0.8"/><path d="M3.1 4.2 L4.4 2" stroke="#afb1b3" stroke-width="0.6"/></svg>
<div style="top:926.05px;height:14.70px;line-height:14.70px;font-size:10.50px;color:#bbbbbb;white-space:pre;left:480.00px;letter-spacing:-0.08px;">Profiler</div>
<svg style="left:533.20px;top:927.80px;width:10.00px;height:11.60px;" viewBox="0 0 5 5.8"><path d="M0.6 1.8 H4.4 V5.6 H0.6 Z M1.4 0.2 H3.6 V1.4 H1.4 Z" fill="#afb1b3"/></svg>
<div style="top:926.05px;height:14.70px;line-height:14.70px;font-size:10.50px;color:#bbbbbb;white-space:pre;left:547.60px;letter-spacing:-0.08px;">App Inspection</div>
<svg style="left:1325.20px;top:927.60px;width:11.60px;height:11.60px;" viewBox="0 0 5.8 5.8"><circle cx="2.9" cy="2.9" r="2.9" fill="#2fa85a"/><text x="2.9" y="4.5" font-size="4.4" text-anchor="middle" fill="#e8f5ec" font-weight="bold" font-family="Liberation Sans, sans-serif">4</text></svg>
<div style="top:926.05px;height:14.70px;line-height:14.70px;font-size:10.50px;color:#bbbbbb;white-space:pre;left:1341.80px;letter-spacing:-0.39px;">Event Log</div>
<svg style="left:1406.00px;top:928.20px;width:12.40px;height:10.80px;" viewBox="0 0 6.2 5.4"><rect x="0.3" y="0.3" width="4.4" height="3.4" fill="none" stroke="#afb1b3" stroke-width="0.6"/><circle cx="4" cy="3.4" r="1.2" fill="#3c3f41" stroke="#afb1b3" stroke-width="0.6"/><path d="M4.9 4.3 L6 5.3" stroke="#afb1b3" stroke-width="0.6"/></svg>
<div style="top:926.05px;height:14.70px;line-height:14.70px;font-size:10.50px;color:#bbbbbb;white-space:pre;left:1422.20px;letter-spacing:-0.05px;">Layout Inspector</div>
<svg style="left:14.80px;top:947.10px;width:11.20px;height:10.40px;" viewBox="0 0 5.6 5.2"><rect x="0.4" y="0.9" width="4.2" height="3.9" fill="none" stroke="#afb1b3" stroke-width="0.6"/><path d="M1.4 0.3 H5.2 V4" fill="none" stroke="#afb1b3" stroke-width="0.5"/></svg>
<div style="top:945.09px;height:14.42px;line-height:14.42px;font-size:10.30px;color:#b4b4b4;white-space:pre;left:38.00px;letter-spacing:-0.02px;">Gradle build failed in 26 s 67 ms (36 minutes ago)</div>
<div style="top:945.09px;height:14.42px;line-height:14.42px;font-size:10.30px;color:#b4b4b4;white-space:pre;left:1248.40px;letter-spacing:0.12px;">43:33</div>
<div style="top:945.09px;height:14.42px;line-height:14.42px;font-size:10.30px;color:#b4b4b4;white-space:pre;left:1286.20px;letter-spacing:-0.91px;">LF</div>
<div style="top:945.09px;height:14.42px;line-height:14.42px;font-size:10.30px;color:#b4b4b4;white-space:pre;left:1307.20px;letter-spacing:-0.12px;">UTF-8</div>
<div style="top:945.09px;height:14.42px;line-height:14.42px;font-size:10.30px;color:#b4b4b4;white-space:pre;left:1348.80px;letter-spacing:-0.08px;">4 spaces</div>
<svg style="left:1401.60px;top:946.70px;width:8.00px;height:11.20px;" viewBox="0 0 4 5.6"><path d="M0.8 0.2 V5.4 M0.8 3.8 C3.2 3.8 3.2 2.4 3.2 0.8" fill="none" stroke="#afb1b3" stroke-width="0.7"/></svg>
<div style="top:945.09px;height:14.42px;line-height:14.42px;font-size:10.30px;color:#b4b4b4;white-space:pre;left:1415.80px;letter-spacing:-0.25px;">EspressoTest</div>
<svg style="left:1483.60px;top:946.70px;width:12.00px;height:11.20px;" viewBox="0 0 6 5.6"><rect x="1.6" y="2.6" width="4" height="2.8" fill="#c4c6c8"/><path d="M0.6 2.6 V1.6 A1.2 1.2 0 0 1 3 1.6 V2.6" fill="none" stroke="#c4c6c8" stroke-width="0.6"/></svg>
<svg style="left:1506.40px;top:947.50px;width:12.00px;height:10.00px;" viewBox="0 0 6 5"><rect x="0.2" y="0.3" width="2.4" height="3.6" fill="#c4c6c8"/><rect x="3.2" y="0.3" width="2.4" height="3.6" fill="#c4c6c8"/><path d="M4.6 3.6 L5.6 4.8" stroke="#c4c6c8" stroke-width="0.6"/></svg>
</div></body></html>
